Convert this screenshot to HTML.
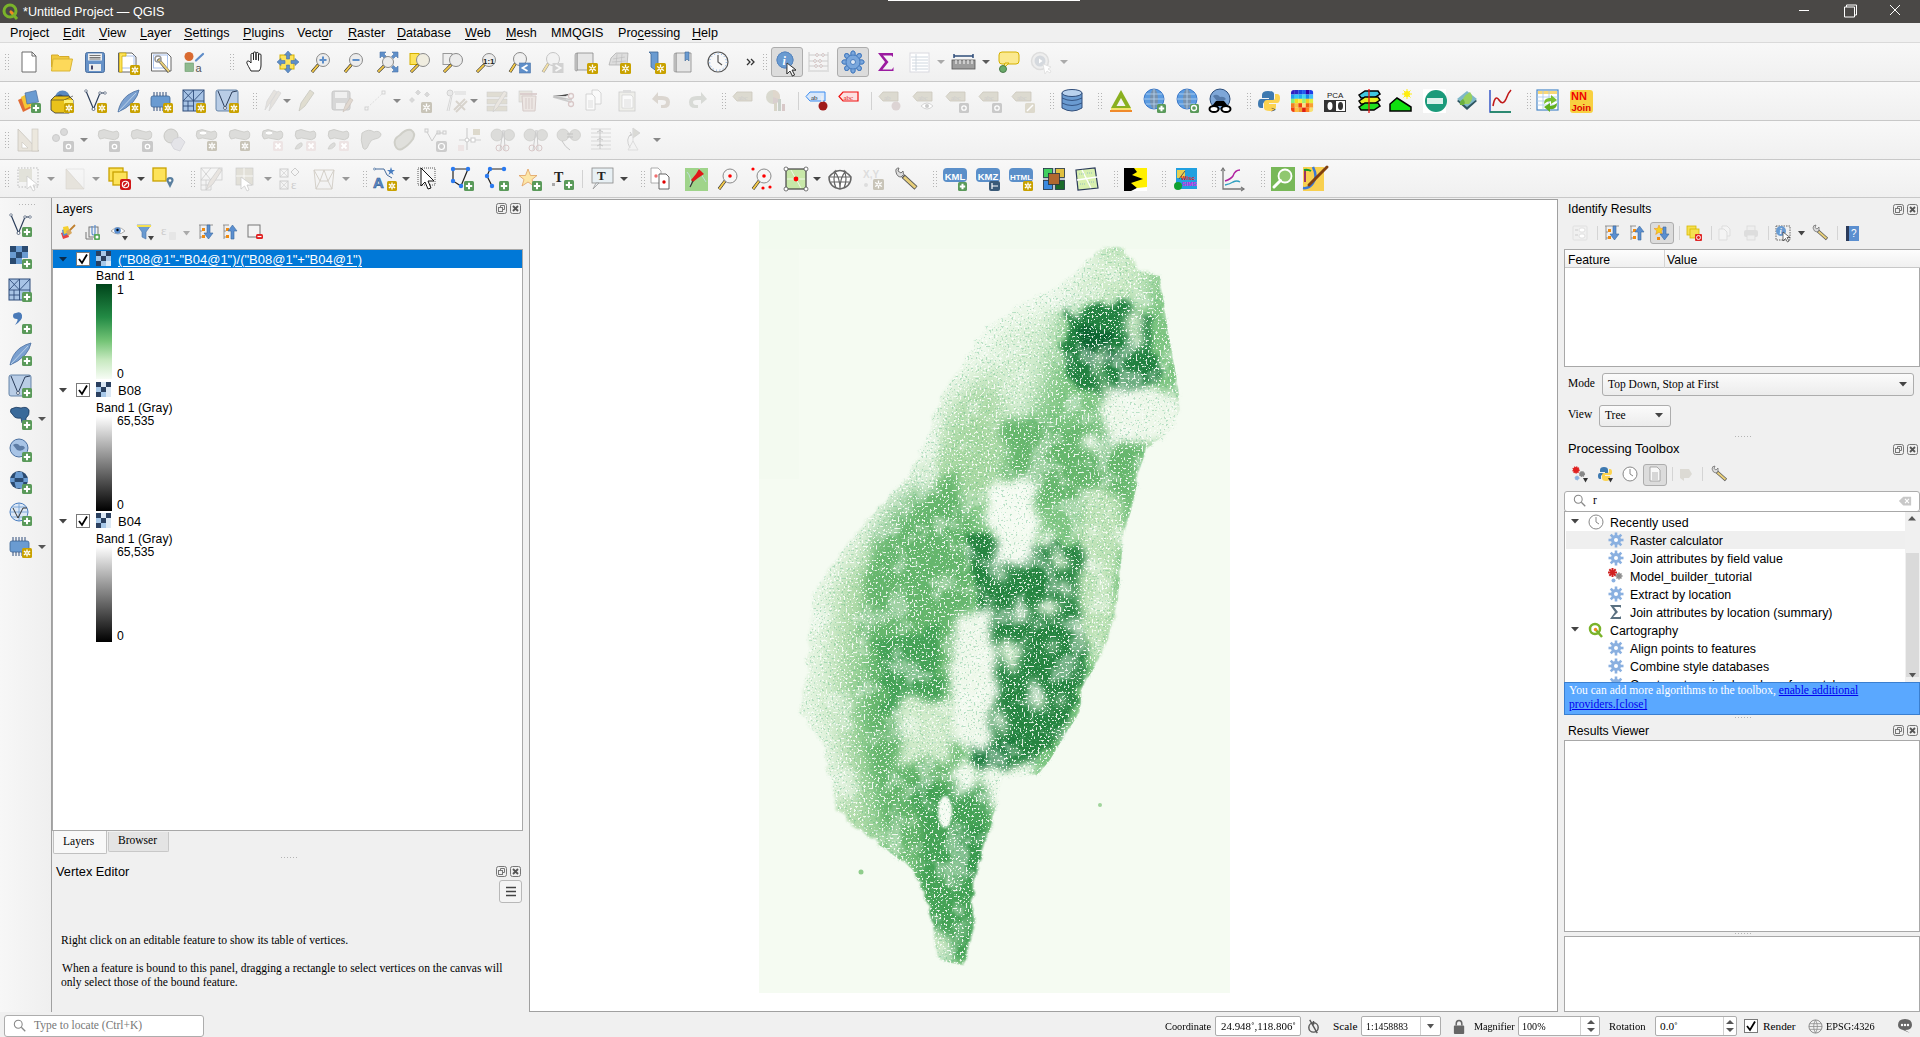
<!DOCTYPE html><html><head><meta charset="utf-8"><style>
html,body{margin:0;padding:0;width:1920px;height:1037px;overflow:hidden;background:#f0f0f0;position:relative;font-family:"Liberation Sans",sans-serif;font-size:12px;color:#000}
.t{position:absolute;white-space:nowrap;line-height:1}
.s{font-family:"Liberation Serif",serif}
svg{position:absolute;overflow:visible}
u{text-decoration:underline;text-decoration-thickness:1px;text-underline-offset:1.5px}
</style></head><body>

<div style="position:absolute;left:0px;top:0px;width:1920px;height:23px;background:#4a4846"></div>
<div style="position:absolute;left:888px;top:0px;width:192px;height:1px;background:#ffffff"></div>
<svg style="left:2px;top:3px" width="17" height="17" viewBox="0 0 17 17"><circle cx="8" cy="8" r="6" fill="none" stroke="#7ab32a" stroke-width="3"/><path d="M9 9L15 16" stroke="#7ab32a" stroke-width="3"/><path d="M8 8L11 11" stroke="#f28a1e" stroke-width="2.5"/></svg>
<div class="t" style="left:23px;top:6.33px;font-size:12.6px;color:#fff">*Untitled Project — QGIS</div>
<svg style="left:1799px;top:5px" width="110" height="12"><path d="M0 5.5H10" stroke="#fff"/><path d="M45.5 2.5H55.5V12.5H45.5ZM47.5 2.5V0.5H57.5V10.5H55.5" fill="none" stroke="#fff" transform="translate(0,-0.5)"/><path d="M91 0L101 10M101 0L91 10" stroke="#fff"/></svg>
<div style="position:absolute;left:0px;top:23px;width:1920px;height:19px;background:#f0f0f0"></div>
<div style="position:absolute;left:0px;top:42px;width:1920px;height:1px;background:#dadada"></div>
<div class="t" style="left:10px;top:27.33px;font-size:12.6px;">Pro<u>j</u>ect</div>
<div class="t" style="left:63px;top:27.33px;font-size:12.6px;"><u>E</u>dit</div>
<div class="t" style="left:99px;top:27.33px;font-size:12.6px;"><u>V</u>iew</div>
<div class="t" style="left:140px;top:27.33px;font-size:12.6px;"><u>L</u>ayer</div>
<div class="t" style="left:184px;top:27.33px;font-size:12.6px;"><u>S</u>ettings</div>
<div class="t" style="left:243px;top:27.33px;font-size:12.6px;"><u>P</u>lugins</div>
<div class="t" style="left:297px;top:27.33px;font-size:12.6px;">Vect<u>o</u>r</div>
<div class="t" style="left:348px;top:27.33px;font-size:12.6px;"><u>R</u>aster</div>
<div class="t" style="left:397px;top:27.33px;font-size:12.6px;"><u>D</u>atabase</div>
<div class="t" style="left:465px;top:27.33px;font-size:12.6px;"><u>W</u>eb</div>
<div class="t" style="left:506px;top:27.33px;font-size:12.6px;"><u>M</u>esh</div>
<div class="t" style="left:551px;top:27.33px;font-size:12.6px;">MMQGIS</div>
<div class="t" style="left:618px;top:27.33px;font-size:12.6px;">Pro<u>c</u>essing</div>
<div class="t" style="left:692px;top:27.33px;font-size:12.6px;"><u>H</u>elp</div>
<div style="position:absolute;left:0px;top:43px;width:1920px;height:38px;background:linear-gradient(#f8f8f8,#f0f0f0)"></div>
<div style="position:absolute;left:0px;top:81px;width:1920px;height:1px;background:#c8c8c8"></div>
<div style="position:absolute;left:0px;top:82px;width:1920px;height:38px;background:linear-gradient(#f8f8f8,#f0f0f0)"></div>
<div style="position:absolute;left:0px;top:120px;width:1920px;height:1px;background:#c8c8c8"></div>
<div style="position:absolute;left:0px;top:121px;width:1920px;height:38px;background:linear-gradient(#f8f8f8,#f0f0f0)"></div>
<div style="position:absolute;left:0px;top:159px;width:1920px;height:1px;background:#c8c8c8"></div>
<div style="position:absolute;left:0px;top:160px;width:1920px;height:37px;background:linear-gradient(#f8f8f8,#f0f0f0)"></div>
<div style="position:absolute;left:0px;top:197px;width:1920px;height:1px;background:#c8c8c8"></div>
<svg style="left:5px;top:54px" width="4" height="17"><rect x="0" y="0" width="1" height="1" fill="#b4b4b4"/><rect x="0" y="3" width="1" height="1" fill="#b4b4b4"/><rect x="0" y="6" width="1" height="1" fill="#b4b4b4"/><rect x="0" y="9" width="1" height="1" fill="#b4b4b4"/><rect x="0" y="12" width="1" height="1" fill="#b4b4b4"/><rect x="0" y="15" width="1" height="1" fill="#b4b4b4"/><rect x="3" y="0" width="1" height="1" fill="#b4b4b4"/><rect x="3" y="3" width="1" height="1" fill="#b4b4b4"/><rect x="3" y="6" width="1" height="1" fill="#b4b4b4"/><rect x="3" y="9" width="1" height="1" fill="#b4b4b4"/><rect x="3" y="12" width="1" height="1" fill="#b4b4b4"/><rect x="3" y="15" width="1" height="1" fill="#b4b4b4"/></svg>
<svg style="left:17px;top:50px" width="24" height="24" viewBox="0 0 24 24" ><path d="M5 2H15L19 6V22H5Z" fill="#fff" stroke="#6b6b6b" stroke-width="1"/><path d="M15 2V6H19" fill="none" stroke="#6b6b6b"/></svg>
<svg style="left:50px;top:50px" width="24" height="24" viewBox="0 0 24 24" ><path d="M1.5 5H8L9.5 6.5H19V17H1.5Z" fill="#f0c93f" stroke="#d4aa2a" stroke-width="1"/><path d="M3 9H22.5L20 21H1.5Z" fill="#fdd95a" stroke="#d9b534" stroke-width="1"/></svg>
<svg style="left:83px;top:50px" width="24" height="24" viewBox="0 0 24 24" ><rect x="2.5" y="2.5" width="19" height="20" rx="2" fill="#6792c8" stroke="#4a6f9f"/><rect x="5" y="3.5" width="14" height="7" fill="#eee"/><path d="M6.5 5.5H17.5M6.5 7.5H17.5M6.5 9H17.5" stroke="#555" stroke-width="0.8"/><rect x="6" y="14" width="12" height="7" fill="#eee"/><rect x="8" y="15.5" width="2" height="4" fill="#446"/></svg>
<svg style="left:116px;top:50px" width="24" height="24" viewBox="0 0 24 24" ><path d="M2.5 3H16L20 7V22H2.5Z" fill="#fff" stroke="#666"/><rect x="5" y="6" width="13" height="12" fill="none" stroke="#a9c2ee"/><path d="M3.5 3H10V6H6V22H3.5Z" fill="#fde35a" stroke="#d4b000" stroke-width="0.8"/><rect x="14" y="15" width="10" height="10" rx="1.5" fill="#c9a200"/><path d="M19.0 16.4V23.6M15.88 18.20L22.12 21.80M15.88 21.80L22.12 18.20" stroke="#fff" stroke-width="1.35"/><circle cx="19.0" cy="20.0" r="1.3" fill="#c9a200" stroke="#fff" stroke-width="1"/></svg>
<svg style="left:149px;top:50px" width="24" height="24" viewBox="0 0 24 24" ><path d="M2.5 3H18L22 7V21H2.5Z" fill="#fff" stroke="#666"/><rect x="4.5" y="5" width="14" height="13" fill="none" stroke="#a9c2ee"/><path d="M9 9L20 22" stroke="#444" stroke-width="3"/><path d="M9.5 9.5L20 21.5" stroke="#e8cf7a" stroke-width="2"/><circle cx="9" cy="9" r="3" fill="none" stroke="#999" stroke-width="1.5"/></svg>
<svg style="left:182px;top:50px" width="24" height="24" viewBox="0 0 24 24" ><circle cx="7" cy="6.5" r="4.5" fill="#d96a30"/><rect x="3" y="13" width="8.5" height="8.5" fill="#8fba8f" stroke="#6a9a6a" stroke-width="0.6"/><path d="M14 10.5L21 4" stroke="#5e8cc8" stroke-width="2.2" stroke-linecap="round"/><text x="13.5" y="21.5" font-family="Liberation Sans" font-size="11" fill="#555">a</text></svg>
<svg style="left:230px;top:54px" width="4" height="17"><rect x="0" y="0" width="1" height="1" fill="#b4b4b4"/><rect x="0" y="3" width="1" height="1" fill="#b4b4b4"/><rect x="0" y="6" width="1" height="1" fill="#b4b4b4"/><rect x="0" y="9" width="1" height="1" fill="#b4b4b4"/><rect x="0" y="12" width="1" height="1" fill="#b4b4b4"/><rect x="0" y="15" width="1" height="1" fill="#b4b4b4"/><rect x="3" y="0" width="1" height="1" fill="#b4b4b4"/><rect x="3" y="3" width="1" height="1" fill="#b4b4b4"/><rect x="3" y="6" width="1" height="1" fill="#b4b4b4"/><rect x="3" y="9" width="1" height="1" fill="#b4b4b4"/><rect x="3" y="12" width="1" height="1" fill="#b4b4b4"/><rect x="3" y="15" width="1" height="1" fill="#b4b4b4"/></svg>
<svg style="left:244px;top:50px" width="24" height="24" viewBox="0 0 24 24" ><path d="M7 21C5 17 2 13 3 11.5C4 10.5 5.5 11 7 13V4.5C7 3 9.5 3 9.5 4.5V10V3C9.5 1.5 12 1.5 12 3V10V3.5C12 2 14.5 2 14.5 3.5V10.5V5C14.5 3.5 17 3.5 17 5V15C17 18 16 20 15 21Z" fill="#fff" stroke="#222" stroke-width="1"/></svg>
<svg style="left:276px;top:50px" width="24" height="24" viewBox="0 0 24 24" ><rect x="4" y="5" width="14" height="14" fill="#fde35a" stroke="#d4b000"/><path d="M12 1L15.5 5H13.5V9H10.5V5H8.5ZM12 23L8.5 19H10.5V15H13.5V19H15.5ZM1 12L5 8.5V10.5H9V13.5H5V15.5ZM23 12L19 15.5V13.5H15V10.5H19V8.5Z" fill="#5f8fc9" stroke="#4a73a8" stroke-width="0.6"/></svg>
<svg style="left:309px;top:50px" width="24" height="24" viewBox="0 0 24 24" ><path d="M9.45 14.55L3 22" stroke="#222" stroke-width="3"/><path d="M9.125 14.875L3.2 21.8" stroke="#f2c94c" stroke-width="2"/><circle cx="14" cy="10" r="6.5" fill="#ececec" stroke="#8a8a8a" stroke-width="1"/><path d="M14 6.5V13.5M10.5 10H17.5" stroke="#5f8fc9" stroke-width="2"/></svg>
<svg style="left:342px;top:50px" width="24" height="24" viewBox="0 0 24 24" ><path d="M9.45 14.55L3 22" stroke="#222" stroke-width="3"/><path d="M9.125 14.875L3.2 21.8" stroke="#f2c94c" stroke-width="2"/><circle cx="14" cy="10" r="6.5" fill="#ececec" stroke="#8a8a8a" stroke-width="1"/><path d="M10.5 10H17.5" stroke="#5f8fc9" stroke-width="2"/></svg>
<svg style="left:375px;top:50px" width="24" height="24" viewBox="0 0 24 24" ><path d="M5 2H11L9 4L11.5 6.5L9.5 8.5L7 6L5 8ZM23 2V8L21 6L18.5 8.5L16.5 6.5L19 4L17 2ZM23 22H17L19 20L16.5 17.5L18.5 15.5L21 18L23 16Z" fill="#5f8fc9" stroke="#4a73a8" stroke-width="0.6"/><path d="M9.15 15.85L3 22" stroke="#222" stroke-width="3"/><path d="M8.875 16.125L3.2 21.8" stroke="#f2c94c" stroke-width="2"/><circle cx="13" cy="12" r="5.5" fill="#ececec" stroke="#8a8a8a" stroke-width="1"/></svg>
<svg style="left:408px;top:50px" width="24" height="24" viewBox="0 0 24 24" ><rect x="2" y="3.5" width="9" height="11" fill="#fde35a" stroke="#d4b000"/><path d="M10.45 14.55L3 22" stroke="#222" stroke-width="3"/><path d="M10.125 14.875L3.2 21.8" stroke="#f2c94c" stroke-width="2"/><circle cx="15" cy="10" r="6.5" fill="#f0ede0" stroke="#8a8a8a" stroke-width="1"/></svg>
<svg style="left:441px;top:50px" width="24" height="24" viewBox="0 0 24 24" ><rect x="2" y="3.5" width="9" height="11" fill="#efefef" stroke="#999"/><path d="M10.45 14.55L3 22" stroke="#222" stroke-width="3"/><path d="M10.125 14.875L3.2 21.8" stroke="#f2c94c" stroke-width="2"/><circle cx="15" cy="10" r="6.5" fill="#ececec" stroke="#8a8a8a" stroke-width="1"/></svg>
<svg style="left:474px;top:50px" width="24" height="24" viewBox="0 0 24 24" ><path d="M10.45 14.55L3 22" stroke="#222" stroke-width="3"/><path d="M10.125 14.875L3.2 21.8" stroke="#f2c94c" stroke-width="2"/><circle cx="15" cy="10" r="6.5" fill="#ececec" stroke="#8a8a8a" stroke-width="1"/><text x="9" y="14" font-family="Liberation Sans" font-weight="bold" font-size="8" fill="#222">1:1</text></svg>
<svg style="left:507px;top:50px" width="24" height="24" viewBox="0 0 24 24" ><path d="M8.45 13.55L3 22" stroke="#222" stroke-width="3"/><path d="M8.125 13.875L3.2 21.8" stroke="#f2c94c" stroke-width="2"/><circle cx="13" cy="9" r="6.5" fill="#f0f0f0" stroke="#8a8a8a" stroke-width="1"/><rect x="12.5" y="13" width="11" height="10" fill="#5f8fc9" stroke="#4a73a8" stroke-width="0.6"/><path d="M20.5 15L15.5 18L20.5 21" fill="none" stroke="#fff" stroke-width="1.8"/></svg>
<svg style="left:540px;top:50px" width="24" height="24" viewBox="0 0 24 24" ><g opacity="0.45"><path d="M8.45 13.55L3 22" stroke="#222" stroke-width="3"/><path d="M8.125 13.875L3.2 21.8" stroke="#f2c94c" stroke-width="2"/><circle cx="13" cy="9" r="6.5" fill="#f0f0f0" stroke="#8a8a8a" stroke-width="1"/><rect x="12.5" y="13" width="11" height="10" fill="#aaa"/><path d="M15.5 15L20.5 18L15.5 21" fill="none" stroke="#fff" stroke-width="1.8"/></g></svg>
<svg style="left:574px;top:50px" width="24" height="24" viewBox="0 0 24 24" ><path d="M3 3H19V20H3Z" fill="#e6e6e6" stroke="#888" stroke-width="0.8"/><path d="M3 3Q1 3 1 5V20Q1 21 3 21V3" fill="#d0d0d0" stroke="#888" stroke-width="0.6"/><rect x="13" y="13" width="11" height="11" rx="1.5" fill="#c9a200"/><path d="M18.5 14.54V22.46M15.07 16.52L21.93 20.48M15.07 20.48L21.93 16.52" stroke="#fff" stroke-width="1.35"/><circle cx="18.5" cy="18.5" r="1.3" fill="#c9a200" stroke="#fff" stroke-width="1"/></svg>
<svg style="left:607px;top:50px" width="24" height="24" viewBox="0 0 24 24" ><path d="M4 8L9 3H21L20 15L2 15Z" fill="#ddd" stroke="#aaa" stroke-width="0.7"/><path d="M6 9L18 7M5 12L19 11M10 4L9 15M15 4L14 15" stroke="#bbb" stroke-width="0.6"/><rect x="13" y="13" width="11" height="11" rx="1.5" fill="#c9a200"/><path d="M18.5 14.54V22.46M15.07 16.52L21.93 20.48M15.07 20.48L21.93 16.52" stroke="#fff" stroke-width="1.35"/><circle cx="18.5" cy="18.5" r="1.3" fill="#c9a200" stroke="#fff" stroke-width="1"/></svg>
<svg style="left:642px;top:50px" width="24" height="24" viewBox="0 0 24 24" ><path d="M7 2H16V22L9 17V4Z" fill="#6a9bd1" stroke="#3e6696" stroke-width="0.8"/><rect x="13" y="13" width="11" height="11" rx="1.5" fill="#c9a200"/><path d="M18.5 14.54V22.46M15.07 16.52L21.93 20.48M15.07 20.48L21.93 16.52" stroke="#fff" stroke-width="1.35"/><circle cx="18.5" cy="18.5" r="1.3" fill="#c9a200" stroke="#fff" stroke-width="1"/></svg>
<svg style="left:672px;top:50px" width="24" height="24" viewBox="0 0 24 24" ><path d="M4 3H19V22H4Z" fill="#e6e6e6" stroke="#888" stroke-width="0.8"/><path d="M4 3Q2 3 2 5V21Q2 22 4 22V3" fill="#d0d0d0" stroke="#888" stroke-width="0.6"/><path d="M13 2H17V11L15 9L13 11Z" fill="#6a9bd1" stroke="#3e6696" stroke-width="0.6"/></svg>
<svg style="left:706px;top:50px" width="24" height="24" viewBox="0 0 24 24" ><circle cx="12" cy="12" r="10" fill="#f8f8f8" stroke="#555" stroke-width="1.2"/><path d="M12 5V12L16 15" stroke="#555" stroke-width="1.2" fill="none"/><circle cx="12" cy="12" r="8.3" fill="none" stroke="#4a8ad8" stroke-width="0.8" stroke-dasharray="1 2.5"/></svg>
<svg style="left:742px;top:50px" width="24" height="24" viewBox="0 0 24 24" ><path d="M5 9L8 12L5 15M9 9L12 12L9 15" fill="none" stroke="#333" stroke-width="1.3"/></svg>
<svg style="left:763px;top:54px" width="4" height="17"><rect x="0" y="0" width="1" height="1" fill="#b4b4b4"/><rect x="0" y="3" width="1" height="1" fill="#b4b4b4"/><rect x="0" y="6" width="1" height="1" fill="#b4b4b4"/><rect x="0" y="9" width="1" height="1" fill="#b4b4b4"/><rect x="0" y="12" width="1" height="1" fill="#b4b4b4"/><rect x="0" y="15" width="1" height="1" fill="#b4b4b4"/><rect x="3" y="0" width="1" height="1" fill="#b4b4b4"/><rect x="3" y="3" width="1" height="1" fill="#b4b4b4"/><rect x="3" y="6" width="1" height="1" fill="#b4b4b4"/><rect x="3" y="9" width="1" height="1" fill="#b4b4b4"/><rect x="3" y="12" width="1" height="1" fill="#b4b4b4"/><rect x="3" y="15" width="1" height="1" fill="#b4b4b4"/></svg>
<div style="position:absolute;left:771px;top:47px;width:32px;height:30px;background:#dcdcdc;border:1px solid #adadad;border-radius:3px;box-sizing:border-box"></div>
<svg style="left:774px;top:50px" width="24" height="24" viewBox="0 0 24 24" ><circle cx="11" cy="10" r="8" fill="#6a9bd1" stroke="#5a88c0"/><text x="8.5" y="15" font-family="Liberation Serif" font-style="italic" font-weight="bold" font-size="12" fill="#fff">i</text><path d="M13 13L13 24L16 21L18.5 26L20.5 25L18 20H22Z" fill="#fff" stroke="#333" stroke-width="0.9"/></svg>
<svg style="left:807px;top:50px" width="24" height="24" viewBox="0 0 24 24" ><path d="M2 2V20M21 2V20M2 5H21M2 11H21M2 16H21M1 21H22" stroke="#ccc" stroke-width="1"/><path d="M8 5L10 3L12 5L10 7ZM14 5L16 3L18 5L16 7ZM6 11L8 9L10 11L8 13ZM11 11L13 9L15 11L13 13ZM7 16L9 14L11 16L9 18ZM12 16L14 14L16 16L14 18Z" fill="none" stroke="#d9c9c9" stroke-width="0.9"/></svg>
<div style="position:absolute;left:837px;top:47px;width:32px;height:30px;background:#dcdcdc;border:1px solid #adadad;border-radius:3px;box-sizing:border-box"></div>
<svg style="left:841px;top:50px" width="24" height="24" viewBox="0 0 24 24" ><g transform="translate(12 12)" fill="#7aa7dc" stroke="#4a7ec0" stroke-width="1"><rect x="-2" y="-11" width="4" height="6" rx="2" transform="rotate(0)"/><rect x="-2" y="-11" width="4" height="6" rx="2" transform="rotate(45)"/><rect x="-2" y="-11" width="4" height="6" rx="2" transform="rotate(90)"/><rect x="-2" y="-11" width="4" height="6" rx="2" transform="rotate(135)"/><rect x="-2" y="-11" width="4" height="6" rx="2" transform="rotate(180)"/><rect x="-2" y="-11" width="4" height="6" rx="2" transform="rotate(225)"/><rect x="-2" y="-11" width="4" height="6" rx="2" transform="rotate(270)"/><rect x="-2" y="-11" width="4" height="6" rx="2" transform="rotate(315)"/><circle r="7" /><circle r="2.5" fill="#dfe9f5"/></g></svg>
<svg style="left:874px;top:50px" width="24" height="24" viewBox="0 0 24 24" ><path d="M4 3H19V7L17.5 5.5H9L14.5 12L8.5 19.5H18L19.5 17V21H4L11 12Z" fill="#9b1ba0"/></svg>
<svg style="left:907px;top:50px" width="24" height="24" viewBox="0 0 24 24" ><rect x="3" y="3" width="19" height="19" fill="#fff" stroke="#d9d9e0"/><path d="M4 7H21M5 10H21M5 13H21M5 16H21M5 19H21M9 4V21" stroke="#d0d8e0" stroke-width="1"/></svg>
<svg style="left:937px;top:60px" width="8" height="5"><path d="M0 0H8L4 4Z" fill="#aaa"/></svg>
<svg style="left:951px;top:50px" width="24" height="24" viewBox="0 0 24 24" ><path d="M3 4V8M3 6H22M22 4V8" stroke="#2f4d7a" stroke-width="1.5"/><rect x="1" y="10" width="23" height="9" fill="#9d9d9d" stroke="#555" stroke-width="0.8"/><path d="M5 10V14M9 10V14M13 10V14M17 10V14M21 10V14" stroke="#fff" stroke-width="1"/></svg>
<svg style="left:982px;top:60px" width="8" height="5"><path d="M0 0H8L4 4Z" fill="#5a5a5a"/></svg>
<svg style="left:996px;top:50px" width="24" height="24" viewBox="0 0 24 24" ><rect x="3" y="2" width="20" height="12" rx="3" fill="#fbe98f" stroke="#d4b000"/><path d="M9 13L7 19L13 13Z" fill="#fbe98f" stroke="#d4b000"/><circle cx="7" cy="19" r="3.5" fill="#6aaa6a" stroke="#4a7a4a"/></svg>
<svg style="left:1029px;top:50px" width="24" height="24" viewBox="0 0 24 24" ><circle cx="11" cy="11" r="8.5" fill="#eee" stroke="#ddd" stroke-width="1.5"/><circle cx="11" cy="11" r="5.5" fill="#d5d9de"/><path d="M10 8.5L13.5 11L10 13.5Z" fill="#fff"/><path d="M14 14L16 24L18 21L21 23L22 21L19 19L22 17Z" fill="#fff" stroke="#ddd" stroke-width="0.8"/></svg>
<svg style="left:1060px;top:60px" width="8" height="5"><path d="M0 0H8L4 4Z" fill="#aaa"/></svg>
<svg style="left:5px;top:93px" width="4" height="17"><rect x="0" y="0" width="1" height="1" fill="#b4b4b4"/><rect x="0" y="3" width="1" height="1" fill="#b4b4b4"/><rect x="0" y="6" width="1" height="1" fill="#b4b4b4"/><rect x="0" y="9" width="1" height="1" fill="#b4b4b4"/><rect x="0" y="12" width="1" height="1" fill="#b4b4b4"/><rect x="0" y="15" width="1" height="1" fill="#b4b4b4"/><rect x="3" y="0" width="1" height="1" fill="#b4b4b4"/><rect x="3" y="3" width="1" height="1" fill="#b4b4b4"/><rect x="3" y="6" width="1" height="1" fill="#b4b4b4"/><rect x="3" y="9" width="1" height="1" fill="#b4b4b4"/><rect x="3" y="12" width="1" height="1" fill="#b4b4b4"/><rect x="3" y="15" width="1" height="1" fill="#b4b4b4"/></svg>
<svg style="left:17px;top:89px" width="24" height="24" viewBox="0 0 24 24" ><path d="M1 11L9 7L14 19L6 23Z" fill="#e06c35"/><path d="M4 8L12 4L16 16L8 20Z" fill="#f5c636"/><path d="M8 4L19 1.5L21.5 13L10 15Z" fill="#6a9bd1" stroke="#4a6f9f" stroke-width="0.7"/><rect x="14" y="14" width="10" height="10" rx="1.5" fill="#5a9a5a"/><path d="M19.0 15.8V22.2M15.8 19.0H22.2" stroke="#fff" stroke-width="2"/></svg>
<svg style="left:50px;top:89px" width="24" height="24" viewBox="0 0 24 24" ><circle cx="12.5" cy="9" r="7.5" fill="#5888c0"/><path d="M8 6Q11 4 13 7Q16 8 15 11Q12 13 9 11Z" fill="#2b4d7a" opacity="0.6"/><path d="M1 11L5 7H19L23 11V21L19 24H5L1 21Z" fill="#e9c21a" stroke="#333" stroke-width="0.8"/><path d="M1 11H14L23 7" fill="none" stroke="#333" stroke-width="0.6"/><path d="M14 11H23V24H14Z" fill="#fcf079"/><rect x="14" y="14" width="10" height="10" rx="1.5" fill="#c9a200"/><path d="M19.0 15.4V22.6M15.88 17.20L22.12 20.80M15.88 20.80L22.12 17.20" stroke="#fff" stroke-width="1.35"/><circle cx="19.0" cy="19.0" r="1.3" fill="#c9a200" stroke="#fff" stroke-width="1"/></svg>
<svg style="left:83px;top:89px" width="24" height="24" viewBox="0 0 24 24" ><path d="M3 2L10.5 20L17 4L22 4" fill="none" stroke="#2b3d5a" stroke-width="1.2"/><path d="M3 0.5L4.5 2L3 3.5L1.5 2ZM17 2.5L18.5 4L17 5.5L15.5 4ZM22 2.5L23.5 4L22 5.5L20.5 4Z" fill="#fff" stroke="#2b3d5a" stroke-width="0.7"/><circle cx="10.5" cy="20" r="1.5" fill="#fff" stroke="#2b3d5a" stroke-width="0.7"/><rect x="14" y="14" width="10" height="10" rx="1.5" fill="#c9a200"/><path d="M19.0 15.4V22.6M15.88 17.20L22.12 20.80M15.88 20.80L22.12 17.20" stroke="#fff" stroke-width="1.35"/><circle cx="19.0" cy="19.0" r="1.3" fill="#c9a200" stroke="#fff" stroke-width="1"/></svg>
<svg style="left:116px;top:89px" width="24" height="24" viewBox="0 0 24 24" ><path d="M2 23Q4 12 12 6Q18 2 23 1Q22 7 17 13Q10 20 2 23Z" fill="#7aa0d0" stroke="#4a6f9f" stroke-width="0.8"/><path d="M3 22L20 4" stroke="#cde" stroke-width="0.8"/><rect x="14" y="14" width="10" height="10" rx="1.5" fill="#c9a200"/><path d="M19.0 15.4V22.6M15.88 17.20L22.12 20.80M15.88 20.80L22.12 17.20" stroke="#fff" stroke-width="1.35"/><circle cx="19.0" cy="19.0" r="1.3" fill="#c9a200" stroke="#fff" stroke-width="1"/></svg>
<svg style="left:149px;top:89px" width="24" height="24" viewBox="0 0 24 24" ><rect x="2" y="7" width="19" height="11" rx="2" fill="#6a9bd1" stroke="#3e6696" stroke-width="0.8"/><path d="M5 3V7M8 3V7M11 3V7M14 3V7M17 3V7M5 18V22M8 18V22M11 18V22M14 18V22M17 18V22" stroke="#2f4d7a" stroke-width="1"/><rect x="14" y="14" width="10" height="10" rx="1.5" fill="#c9a200"/><path d="M19.0 15.4V22.6M15.88 17.20L22.12 20.80M15.88 20.80L22.12 17.20" stroke="#fff" stroke-width="1.35"/><circle cx="19.0" cy="19.0" r="1.3" fill="#c9a200" stroke="#fff" stroke-width="1"/></svg>
<svg style="left:182px;top:89px" width="24" height="24" viewBox="0 0 24 24" ><rect x="1" y="1" width="21" height="21" fill="#a8c4e6" stroke="#2f4d7a" stroke-width="1"/><path d="M1 12H22M11.5 1V22M1 1L11.5 12M11.5 1L1 12M22 1L11.5 12M1 17H11.5M6 12V22" stroke="#2f4d7a" stroke-width="0.9"/><rect x="14" y="14" width="10" height="10" rx="1.5" fill="#c9a200"/><path d="M19.0 15.4V22.6M15.88 17.20L22.12 20.80M15.88 20.80L22.12 17.20" stroke="#fff" stroke-width="1.35"/><circle cx="19.0" cy="19.0" r="1.3" fill="#c9a200" stroke="#fff" stroke-width="1"/></svg>
<svg style="left:215px;top:89px" width="24" height="24" viewBox="0 0 24 24" ><rect x="1" y="1" width="22" height="21" rx="2" fill="#b9cde6" stroke="#5a7aa0" stroke-width="0.9"/><path d="M3 2L10 19L17 3L22 2" fill="none" stroke="#2b3d5a" stroke-width="1"/><circle cx="10" cy="19" r="1.5" fill="#fff" stroke="#2b3d5a" stroke-width="0.7"/><rect x="14" y="14" width="10" height="10" rx="1.5" fill="#c9a200"/><path d="M19.0 15.4V22.6M15.88 17.20L22.12 20.80M15.88 20.80L22.12 17.20" stroke="#fff" stroke-width="1.35"/><circle cx="19.0" cy="19.0" r="1.3" fill="#c9a200" stroke="#fff" stroke-width="1"/></svg>
<svg style="left:253px;top:93px" width="4" height="17"><rect x="0" y="0" width="1" height="1" fill="#b4b4b4"/><rect x="0" y="3" width="1" height="1" fill="#b4b4b4"/><rect x="0" y="6" width="1" height="1" fill="#b4b4b4"/><rect x="0" y="9" width="1" height="1" fill="#b4b4b4"/><rect x="0" y="12" width="1" height="1" fill="#b4b4b4"/><rect x="0" y="15" width="1" height="1" fill="#b4b4b4"/><rect x="3" y="0" width="1" height="1" fill="#b4b4b4"/><rect x="3" y="3" width="1" height="1" fill="#b4b4b4"/><rect x="3" y="6" width="1" height="1" fill="#b4b4b4"/><rect x="3" y="9" width="1" height="1" fill="#b4b4b4"/><rect x="3" y="12" width="1" height="1" fill="#b4b4b4"/><rect x="3" y="15" width="1" height="1" fill="#b4b4b4"/></svg>
<svg style="left:263px;top:89px" width="24" height="24" viewBox="0 0 24 24" ><g opacity="0.55"><path d="M2 21L4 12L11 1L14 3L7 14Z" fill="#d8d3cc" stroke="#bbb" stroke-width="0.7"/><path d="M6 22L8 13L15 2L18 4L11 15Z" fill="#d8d3cc" stroke="#bbb" stroke-width="0.7"/></g></svg>
<svg style="left:283px;top:99px" width="8" height="5"><path d="M0 0H8L4 4Z" fill="#888"/></svg>
<svg style="left:296px;top:89px" width="24" height="24" viewBox="0 0 24 24" ><path d="M3 22L5 14L14 1L18 4L9 17Z" fill="#e0ddd0" stroke="#c8c8c0" stroke-width="0.8"/></svg>
<svg style="left:330px;top:89px" width="24" height="24" viewBox="0 0 24 24" ><rect x="2" y="2" width="18" height="19" rx="2" fill="#d7d7d7" stroke="#c8c8c8"/><rect x="5" y="3" width="12" height="6" fill="#f0f0f0"/><rect x="6" y="14" width="9" height="6" fill="#f0f0f0"/><path d="M13 23L15 17L20 9L23 11L18 19Z" fill="#e0d8d0" stroke="#c8c0b8" stroke-width="0.6"/></svg>
<svg style="left:363px;top:89px" width="24" height="24" viewBox="0 0 24 24" ><rect x="2" y="18" width="3" height="3" fill="none" stroke="#ccc" stroke-width="0.8"/><rect x="19" y="2" width="3" height="3" fill="none" stroke="#ccc" stroke-width="0.8"/><path d="M4.5 18.5L19.5 4.5" stroke="#ddd" stroke-dasharray="2 1.5"/></svg>
<svg style="left:393px;top:99px" width="8" height="5"><path d="M0 0H8L4 4Z" fill="#888"/></svg>
<svg style="left:408px;top:89px" width="24" height="24" viewBox="0 0 24 24" ><path d="M10 1L12.5 3.5L10 6L7.5 3.5ZM19 3L21.5 5.5L19 8L16.5 5.5ZM4 8.5L6.5 11L4 13.5L1.5 11Z" fill="#d9d9d9" stroke="#ccc" stroke-width="0.6"/><rect x="13" y="13" width="11" height="11" rx="1.5" fill="#c8c4b8"/><path d="M18.5 14.54V22.46M15.07 16.52L21.93 20.48M15.07 20.48L21.93 16.52" stroke="#fff" stroke-width="1.35"/><circle cx="18.5" cy="18.5" r="1.3" fill="#c8c4b8" stroke="#fff" stroke-width="1"/></svg>
<svg style="left:444px;top:89px" width="24" height="24" viewBox="0 0 24 24" ><g opacity="0.5"><circle cx="6" cy="4" r="3" fill="#ddd" stroke="#999" stroke-width="0.7"/><path d="M7 6L3 22M8 7L5 22M10 3H22M11 5H22" stroke="#bbb"/><path d="M10 21L21 10M12 23L23 12M12 12L21 21" stroke="#bdb5a8" stroke-width="2"/></g></svg>
<svg style="left:470px;top:99px" width="8" height="5"><path d="M0 0H8L4 4Z" fill="#888"/></svg>
<svg style="left:486px;top:89px" width="24" height="24" viewBox="0 0 24 24" ><rect x="1" y="3" width="20" height="5" fill="#e0ddd3" stroke="#ccc" stroke-width="0.5"/><rect x="1" y="10" width="20" height="5" fill="#e0ddd3" stroke="#ccc" stroke-width="0.5"/><rect x="1" y="17" width="20" height="5" fill="#e0ddd3" stroke="#ccc" stroke-width="0.5"/><path d="M7 23L9 16L18 2L21 4L12 18Z" fill="#eae6e0" stroke="#ccc" stroke-width="0.6"/></svg>
<svg style="left:518px;top:89px" width="24" height="24" viewBox="0 0 24 24" ><rect x="1" y="2" width="13" height="11" fill="#e8e5df" stroke="#ccc" stroke-width="0.6"/><path d="M2 5H19" stroke="#d8c8c8" stroke-width="1.6"/><path d="M4 7H18L17 22H5Z" fill="#ece6e3" stroke="#d6cbc9" stroke-width="1"/><path d="M8 9V20M11 9V20M14 9V20" stroke="#d6cbc9" stroke-width="1"/></svg>
<svg style="left:552px;top:89px" width="24" height="24" viewBox="0 0 24 24" ><path d="M1 7L20 11M1 8L19 13" stroke="#ccc" stroke-width="1.3"/><path d="M2 7L14 7L18 5M2 8L14 10" stroke="#bbb" stroke-width="0.8"/><circle cx="19" cy="7" r="2.5" fill="none" stroke="#d9c8c8" stroke-width="1.3"/><circle cx="19" cy="15" r="2.5" fill="none" stroke="#d9c8c8" stroke-width="1.3"/></svg>
<svg style="left:584px;top:89px" width="24" height="24" viewBox="0 0 24 24" ><path d="M8 1H14L17 4V15H8Z" fill="#fafafa" stroke="#ccc" stroke-width="0.8"/><path d="M2 5H8L11 8V21H2Z" fill="#fafafa" stroke="#ccc" stroke-width="0.8"/><path d="M4 12H9M4 14H9M4 16H9M4 18H9" stroke="#ccc" stroke-width="0.6"/></svg>
<svg style="left:617px;top:89px" width="24" height="24" viewBox="0 0 24 24" ><rect x="2" y="3" width="16" height="19" fill="#eeeeea" stroke="#ccc" stroke-width="0.8"/><rect x="6" y="1" width="8" height="3" fill="#ddd"/><path d="M5 6H14L16 8V19H5Z" fill="#fafafa" stroke="#ccc" stroke-width="0.6"/><path d="M7 11H14M7 13H14M7 15H14M7 17H14" stroke="#ccc" stroke-width="0.6"/></svg>
<svg style="left:651px;top:89px" width="24" height="24" viewBox="0 0 24 24" ><path d="M1 10L7 3V7H11Q19 7 19 13Q19 19 13 19H10V16H12Q15 16 15 13Q15 11 11 11H7V15Z" fill="#dbd6d0"/></svg>
<svg style="left:684px;top:89px" width="24" height="24" viewBox="0 0 24 24" ><path d="M23 10L17 3V7H13Q5 7 5 13Q5 19 11 19H14V16H12Q9 16 9 13Q9 11 13 11H17V15Z" fill="#d8dad6"/></svg>
<svg style="left:722px;top:93px" width="4" height="17"><rect x="0" y="0" width="1" height="1" fill="#b4b4b4"/><rect x="0" y="3" width="1" height="1" fill="#b4b4b4"/><rect x="0" y="6" width="1" height="1" fill="#b4b4b4"/><rect x="0" y="9" width="1" height="1" fill="#b4b4b4"/><rect x="0" y="12" width="1" height="1" fill="#b4b4b4"/><rect x="0" y="15" width="1" height="1" fill="#b4b4b4"/><rect x="3" y="0" width="1" height="1" fill="#b4b4b4"/><rect x="3" y="3" width="1" height="1" fill="#b4b4b4"/><rect x="3" y="6" width="1" height="1" fill="#b4b4b4"/><rect x="3" y="9" width="1" height="1" fill="#b4b4b4"/><rect x="3" y="12" width="1" height="1" fill="#b4b4b4"/><rect x="3" y="15" width="1" height="1" fill="#b4b4b4"/></svg>
<svg style="left:732px;top:89px" width="24" height="24" viewBox="0 0 24 24" ><path d="M1 7.5L5 3H20V12H5Z" fill="#dcdad0" stroke="#cbc8bc" stroke-width="0.8"/><text x="6" y="10.5" font-family="Liberation Serif" font-size="7" fill="#ccc">abc</text></svg>
<svg style="left:765px;top:89px" width="24" height="24" viewBox="0 0 24 24" ><circle cx="8" cy="8" r="7" fill="#d9d9cf"/><path d="M8 8V1A7 7 0 0 1 14.5 10.5Z" fill="#dfd7cc"/><path d="M8 8L14.5 10.5A7 7 0 0 1 8 15Z" fill="#d9cfcf"/><rect x="9" y="14" width="3" height="8" fill="#d8d5c8"/><rect x="13" y="10" width="3" height="12" fill="#c9d0c9"/><rect x="17" y="15" width="3" height="7" fill="#d8c8c8"/></svg>
<div style="position:absolute;left:798px;top:92px;width:1px;height:18px;background:#d2d2d2"></div>
<svg style="left:805px;top:89px" width="24" height="24" viewBox="0 0 24 24" ><path d="M1 7.5L5 3H20V12H5Z" fill="#d8e8fb" stroke="#3b8cf0" stroke-width="1"/><text x="6" y="10.5" font-family="Liberation Serif" font-size="7" fill="#222">ab</text><circle cx="18" cy="17" r="4.5" fill="#a01a1a"/><path d="M17 7V13" stroke="#eee" stroke-width="1.5"/></svg>
<svg style="left:838px;top:89px" width="24" height="24" viewBox="0 0 24 24" ><path d="M1 7.5L5 3H20V12H5Z" fill="#fde0e0" stroke="#f01010" stroke-width="1.2"/><text x="5.5" y="10.5" font-family="Liberation Serif" font-size="7" fill="#e01010">abc</text></svg>
<div style="position:absolute;left:871px;top:92px;width:1px;height:18px;background:#d2d2d2"></div>
<svg style="left:878px;top:89px" width="24" height="24" viewBox="0 0 24 24" ><path d="M1 7.5L5 3H20V12H5Z" fill="#dcdad0" stroke="#cbc8bc" stroke-width="0.8"/><text x="6" y="10.5" font-family="Liberation Serif" font-size="7" fill="#ccc">ab</text><circle cx="18" cy="17" r="4.5" fill="#ddd4d4"/></svg>
<svg style="left:912px;top:89px" width="24" height="24" viewBox="0 0 24 24" ><path d="M1 7.5L5 3H20V12H5Z" fill="#dcdad0" stroke="#cbc8bc" stroke-width="0.8"/><text x="6" y="10.5" font-family="Liberation Serif" font-size="7" fill="#ccc">abc</text><path d="M9 17Q15 11 21 17Q15 23 9 17Z" fill="#fff" stroke="#ccc" stroke-width="0.8"/><circle cx="15" cy="17" r="2" fill="#ccc"/></svg>
<svg style="left:945px;top:89px" width="24" height="24" viewBox="0 0 24 24" ><path d="M1 7.5L5 3H20V12H5Z" fill="#dcdad0" stroke="#cbc8bc" stroke-width="0.8"/><text x="6" y="10.5" font-family="Liberation Serif" font-size="7" fill="#ccc">abc</text><rect x="14" y="14" width="10" height="10" rx="1.5" fill="#c9c9c9"/><circle cx="19.0" cy="19.0" r="2.2" fill="none" stroke="#fff" stroke-width="1.3"/></svg>
<svg style="left:978px;top:89px" width="24" height="24" viewBox="0 0 24 24" ><path d="M1 7.5L5 3H20V12H5Z" fill="#dcdad0" stroke="#cbc8bc" stroke-width="0.8"/><text x="6" y="10.5" font-family="Liberation Serif" font-size="7" fill="#ccc">abc</text><rect x="14" y="14" width="10" height="10" rx="1.5" fill="#c9c9c9"/><circle cx="19.0" cy="19.0" r="2.2" fill="none" stroke="#fff" stroke-width="1.3"/></svg>
<svg style="left:1011px;top:89px" width="24" height="24" viewBox="0 0 24 24" ><path d="M1 7.5L5 3H20V12H5Z" fill="#dcdad0" stroke="#cbc8bc" stroke-width="0.8"/><text x="6" y="10.5" font-family="Liberation Serif" font-size="7" fill="#ccc">abc</text><rect x="14" y="14" width="10" height="10" rx="1.5" fill="#ddd9cc"/><path d="M16 22L22 16" stroke="#fff" stroke-width="1.5"/></svg>
<svg style="left:1050px;top:93px" width="4" height="17"><rect x="0" y="0" width="1" height="1" fill="#b4b4b4"/><rect x="0" y="3" width="1" height="1" fill="#b4b4b4"/><rect x="0" y="6" width="1" height="1" fill="#b4b4b4"/><rect x="0" y="9" width="1" height="1" fill="#b4b4b4"/><rect x="0" y="12" width="1" height="1" fill="#b4b4b4"/><rect x="0" y="15" width="1" height="1" fill="#b4b4b4"/><rect x="3" y="0" width="1" height="1" fill="#b4b4b4"/><rect x="3" y="3" width="1" height="1" fill="#b4b4b4"/><rect x="3" y="6" width="1" height="1" fill="#b4b4b4"/><rect x="3" y="9" width="1" height="1" fill="#b4b4b4"/><rect x="3" y="12" width="1" height="1" fill="#b4b4b4"/><rect x="3" y="15" width="1" height="1" fill="#b4b4b4"/></svg>
<svg style="left:1060px;top:89px" width="24" height="24" viewBox="0 0 24 24" ><path d="M2 4V19Q12 25 22 19V4" fill="#6a9bd1" stroke="#2f4d7a" stroke-width="1"/><ellipse cx="12" cy="4" rx="10" ry="3.5" fill="#b9d2ee" stroke="#2f4d7a" stroke-width="1"/><path d="M2 9Q12 14 22 9M2 14Q12 19 22 14" fill="none" stroke="#2f4d7a" stroke-width="0.9"/></svg>
<svg style="left:1098px;top:93px" width="4" height="17"><rect x="0" y="0" width="1" height="1" fill="#b4b4b4"/><rect x="0" y="3" width="1" height="1" fill="#b4b4b4"/><rect x="0" y="6" width="1" height="1" fill="#b4b4b4"/><rect x="0" y="9" width="1" height="1" fill="#b4b4b4"/><rect x="0" y="12" width="1" height="1" fill="#b4b4b4"/><rect x="0" y="15" width="1" height="1" fill="#b4b4b4"/><rect x="3" y="0" width="1" height="1" fill="#b4b4b4"/><rect x="3" y="3" width="1" height="1" fill="#b4b4b4"/><rect x="3" y="6" width="1" height="1" fill="#b4b4b4"/><rect x="3" y="9" width="1" height="1" fill="#b4b4b4"/><rect x="3" y="12" width="1" height="1" fill="#b4b4b4"/><rect x="3" y="15" width="1" height="1" fill="#b4b4b4"/></svg>
<svg style="left:1109px;top:89px" width="24" height="24" viewBox="0 0 24 24" ><path d="M12 1L22 19H2Z" fill="#8ab020"/><path d="M12 9L16.5 17H7.5Z" fill="#f4f4f4"/><rect x="2" y="19" width="20" height="2" fill="#f3e36f"/><rect x="1" y="21" width="22" height="2" fill="#f08a2a"/></svg>
<svg style="left:1142px;top:89px" width="24" height="24" viewBox="0 0 24 24" ><circle cx="12" cy="10" r="10" fill="#5b9be0" stroke="#1f64c0" stroke-width="0.8"/><ellipse cx="12" cy="10" rx="4" ry="10" fill="#8a8a8a" opacity="0.6"/><path d="M2 10H22M4 5H20M4 15H20M12 0V20" stroke="#b8d4f0" stroke-width="0.8" fill="none"/><rect x="15" y="15" width="9" height="9" rx="1.5" fill="#5a9a5a"/><path d="M19.5 16.8V22.2M16.8 19.5H22.2" stroke="#fff" stroke-width="2"/></svg>
<svg style="left:1175px;top:89px" width="24" height="24" viewBox="0 0 24 24" ><circle cx="12" cy="10" r="10" fill="#5b9be0" stroke="#1f64c0" stroke-width="0.8"/><ellipse cx="12" cy="10" rx="4" ry="10" fill="#8a8a8a" opacity="0.6"/><path d="M2 10H22M4 5H20M4 15H20M12 0V20" stroke="#b8d4f0" stroke-width="0.8" fill="none"/><rect x="15" y="15" width="9" height="9" rx="1.5" fill="#5a9a5a"/><circle cx="19" cy="19" r="2.5" fill="none" stroke="#fff" stroke-width="1.3"/></svg>
<svg style="left:1208px;top:89px" width="24" height="24" viewBox="0 0 24 24" ><circle cx="12" cy="10" r="10" fill="#7ea7d8" stroke="#2b4d7a" stroke-width="1"/><path d="M5 7Q9 4 12 8Q16 7 18 10Q14 14 9 12Z" fill="#2b4d7a" opacity="0.5"/><ellipse cx="6" cy="20" rx="4.5" ry="3" fill="#fff" stroke="#000" stroke-width="2"/><ellipse cx="18" cy="20" rx="4.5" ry="3" fill="#fff" stroke="#000" stroke-width="2"/><path d="M4 17L8 12H16L20 17Z" fill="#000"/></svg>
<svg style="left:1247px;top:93px" width="4" height="17"><rect x="0" y="0" width="1" height="1" fill="#b4b4b4"/><rect x="0" y="3" width="1" height="1" fill="#b4b4b4"/><rect x="0" y="6" width="1" height="1" fill="#b4b4b4"/><rect x="0" y="9" width="1" height="1" fill="#b4b4b4"/><rect x="0" y="12" width="1" height="1" fill="#b4b4b4"/><rect x="0" y="15" width="1" height="1" fill="#b4b4b4"/><rect x="3" y="0" width="1" height="1" fill="#b4b4b4"/><rect x="3" y="3" width="1" height="1" fill="#b4b4b4"/><rect x="3" y="6" width="1" height="1" fill="#b4b4b4"/><rect x="3" y="9" width="1" height="1" fill="#b4b4b4"/><rect x="3" y="12" width="1" height="1" fill="#b4b4b4"/><rect x="3" y="15" width="1" height="1" fill="#b4b4b4"/></svg>
<svg style="left:1257px;top:89px" width="24" height="24" viewBox="0 0 24 24" ><path d="M11 2Q5 2 5 6V9H12V10H4Q1 10 1 15Q1 19 4 19H6V15Q6 13 9 13H14Q17 13 17 10V5Q17 2 11 2Z" fill="#3e79b0"/><path d="M13 22Q19 22 19 18V15H12V14H20Q23 14 23 9Q23 5 20 5H18V9Q18 11 15 11H10Q7 11 7 14V19Q7 22 13 22Z" fill="#fcd34f"/><text x="14" y="23" font-family="Liberation Sans" font-size="8" fill="#333">&gt;</text></svg>
<svg style="left:1290px;top:89px" width="24" height="24" viewBox="0 0 24 24" ><g clip-path="inset(0 round 3px)"><rect x="1.0" y="1.0" width="3.8" height="4.5" fill="#3020c0"/><rect x="4.7" y="1.0" width="3.8" height="4.5" fill="#2a2ac8"/><rect x="8.4" y="1.0" width="3.8" height="4.5" fill="#1848e0"/><rect x="12.100000000000001" y="1.0" width="3.8" height="4.5" fill="#2060f0"/><rect x="15.8" y="1.0" width="3.8" height="4.5" fill="#3000a8"/><rect x="19.5" y="1.0" width="3.8" height="4.5" fill="#2040e8"/><rect x="1.0" y="5.4" width="3.8" height="4.5" fill="#20a0f0"/><rect x="4.7" y="5.4" width="3.8" height="4.5" fill="#30c8f8"/><rect x="8.4" y="5.4" width="3.8" height="4.5" fill="#20b0f0"/><rect x="12.100000000000001" y="5.4" width="3.8" height="4.5" fill="#40d8f0"/><rect x="15.8" y="5.4" width="3.8" height="4.5" fill="#1890e8"/><rect x="19.5" y="5.4" width="3.8" height="4.5" fill="#40c0f8"/><rect x="1.0" y="9.8" width="3.8" height="4.5" fill="#80f080"/><rect x="4.7" y="9.8" width="3.8" height="4.5" fill="#f0e020"/><rect x="8.4" y="9.8" width="3.8" height="4.5" fill="#f8f040"/><rect x="12.100000000000001" y="9.8" width="3.8" height="4.5" fill="#a0f070"/><rect x="15.8" y="9.8" width="3.8" height="4.5" fill="#f0d020"/><rect x="19.5" y="9.8" width="3.8" height="4.5" fill="#e0f040"/><rect x="1.0" y="14.200000000000001" width="3.8" height="4.5" fill="#f08020"/><rect x="4.7" y="14.200000000000001" width="3.8" height="4.5" fill="#f8c040"/><rect x="8.4" y="14.200000000000001" width="3.8" height="4.5" fill="#f04010"/><rect x="12.100000000000001" y="14.200000000000001" width="3.8" height="4.5" fill="#ffe080"/><rect x="15.8" y="14.200000000000001" width="3.8" height="4.5" fill="#f06010"/><rect x="19.5" y="14.200000000000001" width="3.8" height="4.5" fill="#f8a030"/><rect x="1.0" y="18.6" width="3.8" height="4.5" fill="#f04010"/><rect x="4.7" y="18.6" width="3.8" height="4.5" fill="#ffc040"/><rect x="8.4" y="18.6" width="3.8" height="4.5" fill="#f0a030"/><rect x="12.100000000000001" y="18.6" width="3.8" height="4.5" fill="#e02010"/><rect x="15.8" y="18.6" width="3.8" height="4.5" fill="#ff8020"/><rect x="19.5" y="18.6" width="3.8" height="4.5" fill="#f8e070"/></g></svg>
<svg style="left:1323px;top:89px" width="24" height="24" viewBox="0 0 24 24" ><text x="4" y="9" font-family="Liberation Sans" font-size="8" fill="#222">PCA</text><rect x="1" y="11" width="22" height="12" fill="#333"/><rect x="13" y="12" width="9" height="10" fill="#fff"/><ellipse cx="7" cy="17" rx="2.5" ry="4" fill="#fff"/><ellipse cx="17.5" cy="17" rx="2.5" ry="4" fill="#333"/></svg>
<svg style="left:1357px;top:89px" width="24" height="24" viewBox="0 0 24 24" ><path d="M2 6L8 2H21L23 5L17 9H4Z" fill="#40c8e0" stroke="#000" stroke-width="1.5"/><path d="M2 12L8 8H21L23 11L17 15H4Z" fill="#e8f020" stroke="#000" stroke-width="1.5"/><path d="M2 18L8 14H21L23 17L17 21H4Z" fill="#20e020" stroke="#000" stroke-width="1.5"/><path d="M12 0V24" stroke="#e01010" stroke-width="1.3"/></svg>
<svg style="left:1389px;top:89px" width="24" height="24" viewBox="0 0 24 24" ><path d="M1 22V15L8 9L22 18V22Z" fill="#10e010" stroke="#000" stroke-width="1.5"/><circle cx="18" cy="5" r="3" fill="#ffee10"/><path d="M18 0V10M13 5H23M14.5 1.5L21.5 8.5M21.5 1.5L14.5 8.5" stroke="#ffee10" stroke-width="1"/></svg>
<svg style="left:1422px;top:89px" width="24" height="24" viewBox="0 0 24 24" ><rect x="1" y="0" width="23" height="24" fill="#fff"/><circle cx="14" cy="12" r="11" fill="#1a9a7a"/><rect x="5" y="9" width="16" height="6" fill="#fff" opacity="0.85"/></svg>
<svg style="left:1455px;top:89px" width="24" height="24" viewBox="0 0 24 24" ><path d="M2 12L12 4L22 12L12 21Z" fill="#2e5560"/><path d="M2 10L12 2L22 10L12 18Z" fill="#7fb8c8"/><path d="M8 15Q6 8 15 3Q20 9 14 15Z" fill="#98d060"/><path d="M5 16Q4 12 8 10Q11 13 9 16Z" fill="#6ab040"/></svg>
<svg style="left:1488px;top:89px" width="24" height="24" viewBox="0 0 24 24" ><path d="M2 1V23H23" fill="none" stroke="#1a40c0" stroke-width="1.3"/><path d="M2 23H23" stroke="#1a9a40" stroke-width="1.3"/><path d="M5 17Q7 5 11 11Q15 17 18 10Q20 4 23 1" fill="none" stroke="#c01818" stroke-width="1.6"/></svg>
<svg style="left:1527px;top:93px" width="4" height="17"><rect x="0" y="0" width="1" height="1" fill="#b4b4b4"/><rect x="0" y="3" width="1" height="1" fill="#b4b4b4"/><rect x="0" y="6" width="1" height="1" fill="#b4b4b4"/><rect x="0" y="9" width="1" height="1" fill="#b4b4b4"/><rect x="0" y="12" width="1" height="1" fill="#b4b4b4"/><rect x="0" y="15" width="1" height="1" fill="#b4b4b4"/><rect x="3" y="0" width="1" height="1" fill="#b4b4b4"/><rect x="3" y="3" width="1" height="1" fill="#b4b4b4"/><rect x="3" y="6" width="1" height="1" fill="#b4b4b4"/><rect x="3" y="9" width="1" height="1" fill="#b4b4b4"/><rect x="3" y="12" width="1" height="1" fill="#b4b4b4"/><rect x="3" y="15" width="1" height="1" fill="#b4b4b4"/></svg>
<svg style="left:1536px;top:89px" width="24" height="24" viewBox="0 0 24 24" ><rect x="1" y="1" width="21" height="20" fill="#fff" stroke="#4a88c8" stroke-width="1.2"/><rect x="2" y="2" width="19" height="3" fill="#f8d878"/><path d="M1 8H22M1 12H22M1 16H22M7 2V21M13 2V21" stroke="#a8c8e8" stroke-width="0.8"/><path d="M8 15Q8 8 15 9V6L21 11L15 15V12Q11 12 8 15Z" fill="#78c030"/><path d="M21 14Q21 21 14 20V23L8 18L14 14V17Q18 17 21 14Z" fill="#60b020"/></svg>
<svg style="left:1570px;top:89px" width="24" height="24" viewBox="0 0 24 24" ><rect x="0" y="1" width="23" height="23" rx="3" fill="#f8d040"/><text x="1" y="11" font-family="Liberation Sans" font-weight="bold" font-size="11" fill="#f00000">NN</text><text x="1.5" y="22" font-family="Liberation Sans" font-weight="bold" font-size="9.5" fill="#e00000">Join</text></svg>
<svg style="left:5px;top:132px" width="4" height="17"><rect x="0" y="0" width="1" height="1" fill="#b4b4b4"/><rect x="0" y="3" width="1" height="1" fill="#b4b4b4"/><rect x="0" y="6" width="1" height="1" fill="#b4b4b4"/><rect x="0" y="9" width="1" height="1" fill="#b4b4b4"/><rect x="0" y="12" width="1" height="1" fill="#b4b4b4"/><rect x="0" y="15" width="1" height="1" fill="#b4b4b4"/><rect x="3" y="0" width="1" height="1" fill="#b4b4b4"/><rect x="3" y="3" width="1" height="1" fill="#b4b4b4"/><rect x="3" y="6" width="1" height="1" fill="#b4b4b4"/><rect x="3" y="9" width="1" height="1" fill="#b4b4b4"/><rect x="3" y="12" width="1" height="1" fill="#b4b4b4"/><rect x="3" y="15" width="1" height="1" fill="#b4b4b4"/></svg>
<svg style="left:17px;top:128px" width="24" height="24" viewBox="0 0 24 24" ><path d="M1 1L22 23H1Z" fill="#e8e4dc" stroke="#c8c4bc" stroke-width="0.8"/><path d="M5 14L11 20H5Z" fill="#fff" stroke="#c8c4bc" stroke-width="0.6"/><rect x="15" y="1" width="6" height="22" fill="#ece8de" stroke="#c8c4bc" stroke-width="0.6"/></svg>
<svg style="left:50px;top:128px" width="24" height="24" viewBox="0 0 24 24" ><circle cx="6" cy="10" r="3.5" fill="#dadada" stroke="#ccc"/><circle cx="14" cy="4" r="3.5" fill="#dadada" stroke="#ccc"/><rect x="13" y="13" width="11" height="11" rx="1.5" fill="#c9c9c9"/><circle cx="18.5" cy="18.5" r="2.2" fill="none" stroke="#fff" stroke-width="1.3"/></svg>
<svg style="left:80px;top:138px" width="8" height="5"><path d="M0 0H8L4 4Z" fill="#888"/></svg>
<svg style="left:96px;top:128px" width="24" height="24" viewBox="0 0 24 24" ><path d="M3 3Q8 0 13 3Q17 5 21 3Q24 5 22 10Q19 13 14 11Q8 9 4 11Q1 8 3 3Z" fill="#dcdcda" stroke="#c8c8c4" stroke-width="0.8"/><rect x="13" y="13" width="11" height="11" rx="1.5" fill="#c9c9c9"/><circle cx="18.5" cy="18.5" r="2.2" fill="none" stroke="#fff" stroke-width="1.3"/></svg>
<svg style="left:129px;top:128px" width="24" height="24" viewBox="0 0 24 24" ><path d="M3 3Q8 0 13 3Q17 5 21 3Q24 5 22 10Q19 13 14 11Q8 9 4 11Q1 8 3 3Z" fill="#dcdcda" stroke="#c8c8c4" stroke-width="0.8"/><rect x="13" y="13" width="11" height="11" rx="1.5" fill="#c9c9c9"/><circle cx="18.5" cy="18.5" r="2.2" fill="none" stroke="#fff" stroke-width="1.3"/></svg>
<svg style="left:162px;top:128px" width="24" height="24" viewBox="0 0 24 24" ><circle cx="9" cy="8" r="7" fill="#dcdcda" stroke="#c8c8c4"/><path d="M12 11L18 9L23 14L18 23L12 21L9 16Z" fill="#e4e4e8" stroke="#cfcfd4" stroke-width="0.7"/></svg>
<svg style="left:194px;top:128px" width="24" height="24" viewBox="0 0 24 24" ><path d="M3 3Q8 0 13 3Q17 5 21 3Q24 5 22 10Q19 13 14 11Q8 9 4 11Q1 8 3 3Z" fill="#dcdcda" stroke="#c8c8c4" stroke-width="0.8"/><ellipse cx="9" cy="5" rx="4" ry="2" fill="#fff" stroke="#c8c8c4" stroke-width="0.6"/><rect x="13" y="13" width="10" height="10" rx="1.5" fill="#c8c4b8"/><path d="M18.0 14.4V21.6M14.88 16.20L21.12 19.80M14.88 19.80L21.12 16.20" stroke="#fff" stroke-width="1.35"/><circle cx="18.0" cy="18.0" r="1.3" fill="#c8c4b8" stroke="#fff" stroke-width="1"/></svg>
<svg style="left:227px;top:128px" width="24" height="24" viewBox="0 0 24 24" ><path d="M3 3Q8 0 13 3Q17 5 21 3Q24 5 22 10Q19 13 14 11Q8 9 4 11Q1 8 3 3Z" fill="#dcdcda" stroke="#c8c8c4" stroke-width="0.8"/><rect x="13" y="13" width="10" height="10" rx="1.5" fill="#c8c4b8"/><path d="M18.0 14.4V21.6M14.88 16.20L21.12 19.80M14.88 19.80L21.12 16.20" stroke="#fff" stroke-width="1.35"/><circle cx="18.0" cy="18.0" r="1.3" fill="#c8c4b8" stroke="#fff" stroke-width="1"/></svg>
<svg style="left:260px;top:128px" width="24" height="24" viewBox="0 0 24 24" ><path d="M3 3Q8 0 13 3Q17 5 21 3Q24 5 22 10Q19 13 14 11Q8 9 4 11Q1 8 3 3Z" fill="#dcdcda" stroke="#c8c8c4" stroke-width="0.8"/><ellipse cx="9" cy="5" rx="4" ry="2" fill="#fff" stroke="#c8c8c4" stroke-width="0.6"/><rect x="13" y="13" width="10" height="10" rx="1.5" fill="#ede4e4"/><path d="M15.5 15.5L20.5 20.5M20.5 15.5L15.5 20.5" stroke="#fff" stroke-width="1.8"/></svg>
<svg style="left:293px;top:128px" width="24" height="24" viewBox="0 0 24 24" ><path d="M3 3Q8 0 13 3Q17 5 21 3Q24 5 22 10Q19 13 14 11Q8 9 4 11Q1 8 3 3Z" fill="#dcdcda" stroke="#c8c8c4" stroke-width="0.8"/><path d="M2 21Q3 17 7 15Q10 14 9 18Q6 22 2 21Z" fill="#dcdcda" stroke="#c8c8c4" stroke-width="0.6"/><rect x="13" y="13" width="10" height="10" rx="1.5" fill="#ede4e4"/><path d="M15.5 15.5L20.5 20.5M20.5 15.5L15.5 20.5" stroke="#fff" stroke-width="1.8"/></svg>
<svg style="left:326px;top:128px" width="24" height="24" viewBox="0 0 24 24" ><path d="M3 3Q8 0 13 3Q17 5 21 3Q24 5 22 10Q19 13 14 11Q8 9 4 11Q1 8 3 3Z" fill="#dcdcda" stroke="#c8c8c4" stroke-width="0.8"/><path d="M2 21Q3 17 7 15Q10 14 9 18Q6 22 2 21Z" fill="#dcdcda" stroke="#c8c8c4" stroke-width="0.6"/><rect x="13" y="13" width="10" height="10" rx="1.5" fill="#ede4e4"/><path d="M15.5 15.5L20.5 20.5M20.5 15.5L15.5 20.5" stroke="#fff" stroke-width="1.8"/></svg>
<svg style="left:359px;top:128px" width="24" height="24" viewBox="0 0 24 24" ><path d="M3 5Q10 0 15 4Q20 2 22 6Q22 10 16 11Q12 11 10 16Q7 24 4 20Q1 12 3 5Z" fill="#dcdcda" stroke="#c8c8c4" stroke-width="0.8"/></svg>
<svg style="left:392px;top:128px" width="24" height="24" viewBox="0 0 24 24" ><path d="M3 17Q1 11 8 7Q14 1 19 2Q24 5 21 11Q16 18 10 21Q5 23 3 17Z" fill="#e0e0dc" stroke="#cfcfc8" stroke-width="2"/></svg>
<svg style="left:424px;top:128px" width="24" height="24" viewBox="0 0 24 24" ><rect x="1" y="1" width="3" height="3" fill="none" stroke="#ccc"/><rect x="13" y="3" width="3" height="3" fill="none" stroke="#ccc"/><rect x="19" y="3" width="3" height="3" fill="none" stroke="#ccc"/><path d="M3 4L8 13L13 5H19" stroke="#ccc" fill="none"/><rect x="12" y="13" width="11" height="11" rx="2" fill="#ccc"/><circle cx="17.5" cy="18.5" r="3" fill="none" stroke="#fff" stroke-width="1.2"/></svg>
<svg style="left:457px;top:128px" width="24" height="24" viewBox="0 0 24 24" ><path d="M10 0V22M2 12H24" stroke="#d0d0d0" stroke-width="1.2"/><circle cx="10" cy="12" r="2" fill="#fff" stroke="#ccc"/><rect x="14" y="10" width="4" height="4" fill="#fff" stroke="#ccc"/><rect x="16" y="1" width="7" height="6" fill="#ddd9cc"/><rect x="1" y="17" width="6" height="6" fill="#ede4e4"/></svg>
<svg style="left:491px;top:128px" width="24" height="24" viewBox="0 0 24 24" ><circle cx="6" cy="7" r="6" fill="#dcdcda" stroke="#c8c8c4" stroke-width="0.6"/><circle cx="18" cy="7" r="5.5" fill="#dcdcda" stroke="#c8c8c4" stroke-width="0.6"/><path d="M12 2L9 22M13 2L14 22" stroke="#ccc"/><circle cx="8" cy="20" r="3" fill="none" stroke="#d8c8c8"/><circle cx="15" cy="20" r="3" fill="none" stroke="#d8c8c8"/></svg>
<svg style="left:524px;top:128px" width="24" height="24" viewBox="0 0 24 24" ><circle cx="6" cy="7" r="6" fill="#dcdcda" stroke="#c8c8c4" stroke-width="0.6"/><circle cx="18" cy="7" r="5.5" fill="#dcdcda" stroke="#c8c8c4" stroke-width="0.6"/><path d="M12 2L9 22M13 2L14 22" stroke="#ccc"/><circle cx="8" cy="20" r="3" fill="none" stroke="#d8c8c8"/><circle cx="15" cy="20" r="3" fill="none" stroke="#d8c8c8"/></svg>
<svg style="left:557px;top:128px" width="24" height="24" viewBox="0 0 24 24" ><circle cx="6" cy="7" r="6" fill="#dcdcda" stroke="#c8c8c4" stroke-width="0.6"/><circle cx="18" cy="7" r="5.5" fill="#dcdcda" stroke="#c8c8c4" stroke-width="0.6"/><path d="M10 6H16M10 9H16M5 13Q8 19 13 22" stroke="#bbb" stroke-width="0.8" fill="none"/></svg>
<svg style="left:590px;top:128px" width="24" height="24" viewBox="0 0 24 24" ><path d="M1 1H21M1 5H21M1 9H21M1 13H21M1 17H21M1 21H21" stroke="#d8d8d8"/><path d="M10 1V21M7 4Q10 1 13 4M7 12Q10 9 13 12M7 18Q10 15 13 18" stroke="#bbb" fill="none" stroke-width="0.8"/></svg>
<svg style="left:623px;top:128px" width="24" height="24" viewBox="0 0 24 24" ><path d="M8 6Q2 11 7 20" fill="none" stroke="#ccc" stroke-width="0.9"/><path d="M7 4L9 7L6 8" fill="none" stroke="#ccc"/><path d="M10 0L17 5L10 10Z" fill="#dadad6" stroke="#ccc" stroke-width="0.6"/><path d="M10 0V14M10 13L5 22H15Z" fill="none" stroke="#ddd"/></svg>
<svg style="left:653px;top:138px" width="8" height="5"><path d="M0 0H8L4 4Z" fill="#888"/></svg>
<svg style="left:5px;top:171px" width="4" height="17"><rect x="0" y="0" width="1" height="1" fill="#b4b4b4"/><rect x="0" y="3" width="1" height="1" fill="#b4b4b4"/><rect x="0" y="6" width="1" height="1" fill="#b4b4b4"/><rect x="0" y="9" width="1" height="1" fill="#b4b4b4"/><rect x="0" y="12" width="1" height="1" fill="#b4b4b4"/><rect x="0" y="15" width="1" height="1" fill="#b4b4b4"/><rect x="3" y="0" width="1" height="1" fill="#b4b4b4"/><rect x="3" y="3" width="1" height="1" fill="#b4b4b4"/><rect x="3" y="6" width="1" height="1" fill="#b4b4b4"/><rect x="3" y="9" width="1" height="1" fill="#b4b4b4"/><rect x="3" y="12" width="1" height="1" fill="#b4b4b4"/><rect x="3" y="15" width="1" height="1" fill="#b4b4b4"/></svg>
<svg style="left:17px;top:167px" width="24" height="24" viewBox="0 0 24 24" ><rect x="1" y="1" width="20" height="19" fill="none" stroke="#bbb" stroke-dasharray="1.5 1.5"/><rect x="2" y="2" width="13" height="13" fill="#e2e2da"/><path d="M10 9L10 22L13.5 19L16 24L18 23L16 18H21Z" fill="#fff" stroke="#ccc" stroke-width="0.8"/></svg>
<svg style="left:47px;top:177px" width="8" height="5"><path d="M0 0H8L4 4Z" fill="#999"/></svg>
<svg style="left:64px;top:167px" width="24" height="24" viewBox="0 0 24 24" ><path d="M2 2H20V22Z" fill="none" stroke="#ddd" stroke-width="0.6"/><path d="M2 2V22H20Z" fill="#e6e3dc" stroke="#d8d4cc" stroke-width="0.6"/></svg>
<svg style="left:92px;top:177px" width="8" height="5"><path d="M0 0H8L4 4Z" fill="#999"/></svg>
<svg style="left:108px;top:167px" width="24" height="24" viewBox="0 0 24 24" ><rect x="1" y="1" width="14" height="13" fill="#fde35a" stroke="#c9a200" stroke-width="1.3"/><rect x="5" y="5" width="14" height="13" fill="#fde35a" stroke="#c9a200" stroke-width="1.3"/><rect x="12" y="12" width="11" height="11" rx="2" fill="#d01818"/><circle cx="17.5" cy="17.5" r="3.2" fill="none" stroke="#fff" stroke-width="1.1"/><path d="M15.5 19.5L19.5 15.5" stroke="#fff" stroke-width="1.1"/></svg>
<svg style="left:137px;top:177px" width="8" height="5"><path d="M0 0H8L4 4Z" fill="#444"/></svg>
<svg style="left:152px;top:167px" width="24" height="24" viewBox="0 0 24 24" ><rect x="1" y="1" width="13" height="13" fill="#fde35a" stroke="#c9a200" stroke-width="1.3"/><path d="M18 21L14.5 14Q14 10 18 10Q22 10 21.5 14Z" fill="#5a7f9f"/><circle cx="18" cy="13.5" r="1.3" fill="#fff"/></svg>
<svg style="left:191px;top:171px" width="4" height="17"><rect x="0" y="0" width="1" height="1" fill="#b4b4b4"/><rect x="0" y="3" width="1" height="1" fill="#b4b4b4"/><rect x="0" y="6" width="1" height="1" fill="#b4b4b4"/><rect x="0" y="9" width="1" height="1" fill="#b4b4b4"/><rect x="0" y="12" width="1" height="1" fill="#b4b4b4"/><rect x="0" y="15" width="1" height="1" fill="#b4b4b4"/><rect x="3" y="0" width="1" height="1" fill="#b4b4b4"/><rect x="3" y="3" width="1" height="1" fill="#b4b4b4"/><rect x="3" y="6" width="1" height="1" fill="#b4b4b4"/><rect x="3" y="9" width="1" height="1" fill="#b4b4b4"/><rect x="3" y="12" width="1" height="1" fill="#b4b4b4"/><rect x="3" y="15" width="1" height="1" fill="#b4b4b4"/></svg>
<svg style="left:200px;top:167px" width="24" height="24" viewBox="0 0 24 24" ><rect x="1" y="1" width="21" height="12" fill="none" stroke="#ccc" stroke-width="0.8"/><path d="M1 1L11 13M11 1L1 13M1 13V23H11V13M1 18H11M6 13V23" stroke="#ccc" stroke-width="0.8" fill="none"/><path d="M6 23L9 15L19 1L22 3L13 17Z" fill="#e8e4e0" stroke="#ccc" stroke-width="0.7"/></svg>
<svg style="left:235px;top:167px" width="24" height="24" viewBox="0 0 24 24" ><rect x="1" y="1" width="17" height="17" fill="#e2e0d8" stroke="#ccc" stroke-width="0.7"/><path d="M1 9H18M9 1V18" stroke="#fff" stroke-width="0.8"/><path d="M6 10L6 22L9.5 19L12 24L14 23L12 18H17Z" fill="#fff" stroke="#ccc" stroke-width="0.8"/></svg>
<svg style="left:264px;top:177px" width="8" height="5"><path d="M0 0H8L4 4Z" fill="#999"/></svg>
<svg style="left:279px;top:167px" width="24" height="24" viewBox="0 0 24 24" ><rect x="1" y="2" width="8" height="8" fill="none" stroke="#ccc"/><path d="M1 2L9 10M9 2L1 10" stroke="#ccc" stroke-width="0.6"/><rect x="1" y="14" width="8" height="8" fill="none" stroke="#ccc"/><path d="M1 14L9 22M9 14L1 22" stroke="#ccc" stroke-width="0.6"/><path d="M16 1L20 5L16 9L12 5Z" fill="none" stroke="#ccc"/><text x="12" y="22" font-family="Liberation Serif" font-size="13" fill="#ccc">ε</text></svg>
<svg style="left:312px;top:167px" width="24" height="24" viewBox="0 0 24 24" ><path d="M2 3L12 3L22 3L20 22H4Z M2 3L8 14L12 3L16 14L22 3M4 22L8 14L16 14L20 22" fill="none" stroke="#d0ccc4" stroke-width="0.9"/></svg>
<svg style="left:342px;top:177px" width="8" height="5"><path d="M0 0H8L4 4Z" fill="#999"/></svg>
<svg style="left:363px;top:171px" width="4" height="17"><rect x="0" y="0" width="1" height="1" fill="#b4b4b4"/><rect x="0" y="3" width="1" height="1" fill="#b4b4b4"/><rect x="0" y="6" width="1" height="1" fill="#b4b4b4"/><rect x="0" y="9" width="1" height="1" fill="#b4b4b4"/><rect x="0" y="12" width="1" height="1" fill="#b4b4b4"/><rect x="0" y="15" width="1" height="1" fill="#b4b4b4"/><rect x="3" y="0" width="1" height="1" fill="#b4b4b4"/><rect x="3" y="3" width="1" height="1" fill="#b4b4b4"/><rect x="3" y="6" width="1" height="1" fill="#b4b4b4"/><rect x="3" y="9" width="1" height="1" fill="#b4b4b4"/><rect x="3" y="12" width="1" height="1" fill="#b4b4b4"/><rect x="3" y="15" width="1" height="1" fill="#b4b4b4"/></svg>
<svg style="left:373px;top:167px" width="24" height="24" viewBox="0 0 24 24" ><path d="M1 2H11L14 8L19 11" fill="none" stroke="#2f5a90" stroke-width="0.9"/><circle cx="1.5" cy="2" r="1" fill="#fff" stroke="#2f5a90" stroke-width="0.6"/><text x="0" y="21" font-family="Liberation Sans" font-weight="bold" font-size="15" fill="#5a8ac8" stroke="#2f5a90" stroke-width="0.6">A</text><path d="M18 0L19 3H22L19.5 5L20.5 8L18 6L15.5 8L16.5 5L14 3H17Z" fill="#4a7ec0"/><rect x="14" y="14" width="10" height="10" rx="1.5" fill="#c9a200"/><path d="M19.0 15.4V22.6M15.88 17.20L22.12 20.80M15.88 20.80L22.12 17.20" stroke="#fff" stroke-width="1.35"/><circle cx="19.0" cy="19.0" r="1.3" fill="#c9a200" stroke="#fff" stroke-width="1"/></svg>
<svg style="left:402px;top:177px" width="8" height="5"><path d="M0 0H8L4 4Z" fill="#555"/></svg>
<svg style="left:417px;top:167px" width="24" height="24" viewBox="0 0 24 24" ><rect x="1" y="1" width="17" height="17" fill="none" stroke="#333" stroke-width="0.8" stroke-dasharray="1 1"/><path d="M4 1L4 19L8 15L11 22L14 21L11 14H17Z" fill="#fff" stroke="#111" stroke-width="1"/></svg>
<svg style="left:450px;top:167px" width="24" height="24" viewBox="0 0 24 24" ><path d="M3 2H18L11 19L3 14Z" fill="none" stroke="#222" stroke-width="1.2"/><circle cx="3" cy="2" r="2.2" fill="#2a7af0"/><circle cx="18" cy="2" r="2.2" fill="#2a7af0"/><circle cx="11" cy="19" r="2.2" fill="#2a7af0"/><circle cx="3" cy="14" r="2.2" fill="#2a7af0"/><rect x="14" y="14" width="10" height="10" rx="1.5" fill="#5a9a5a"/><path d="M19.0 15.8V22.2M15.8 19.0H22.2" stroke="#fff" stroke-width="2"/></svg>
<svg style="left:485px;top:167px" width="24" height="24" viewBox="0 0 24 24" ><path d="M19 2H5L2 9L7 19" fill="none" stroke="#222" stroke-width="1.2"/><circle cx="19" cy="2" r="2.2" fill="#2a7af0"/><circle cx="5" cy="2" r="2.2" fill="#2a7af0"/><circle cx="2" cy="9" r="2.2" fill="#2a7af0"/><circle cx="7" cy="19" r="2.2" fill="#2a7af0"/><rect x="14" y="14" width="10" height="10" rx="1.5" fill="#5a9a5a"/><path d="M19.0 15.8V22.2M15.8 19.0H22.2" stroke="#fff" stroke-width="2"/></svg>
<svg style="left:518px;top:167px" width="24" height="24" viewBox="0 0 24 24" ><path d="M10 2L12.5 8.5H19L14 12.5L16 19L10 15L4 19L6 12.5L1 8.5H7.5Z" fill="#fce6a8" stroke="#e0a060" stroke-width="0.8"/><rect x="14" y="14" width="10" height="10" rx="1.5" fill="#5a9a5a"/><path d="M19.0 15.8V22.2M15.8 19.0H22.2" stroke="#fff" stroke-width="2"/></svg>
<svg style="left:551px;top:167px" width="24" height="24" viewBox="0 0 24 24" ><text x="3" y="15" font-family="Liberation Serif" font-weight="bold" font-size="14" fill="#222">T</text><rect x="1" y="16" width="3" height="3" fill="#aaa"/><rect x="13" y="13" width="10" height="10" rx="1.5" fill="#5a9a5a"/><path d="M18.0 14.8V21.2M14.8 18.0H21.2" stroke="#fff" stroke-width="2"/></svg>
<div style="position:absolute;left:582px;top:170px;width:1px;height:18px;background:#d2d2d2"></div>
<svg style="left:591px;top:167px" width="24" height="24" viewBox="0 0 24 24" ><rect x="1" y="1" width="21" height="15" fill="#e8f0f4" stroke="#888" stroke-width="0.8"/><path d="M2 22L8 16H5Z" fill="#e8f0f4" stroke="#999" stroke-width="0.8"/><text x="6" y="13" font-family="Liberation Serif" font-weight="bold" font-size="13" fill="#222">T</text></svg>
<svg style="left:620px;top:177px" width="8" height="5"><path d="M0 0H8L4 4Z" fill="#444"/></svg>
<svg style="left:641px;top:171px" width="4" height="17"><rect x="0" y="0" width="1" height="1" fill="#b4b4b4"/><rect x="0" y="3" width="1" height="1" fill="#b4b4b4"/><rect x="0" y="6" width="1" height="1" fill="#b4b4b4"/><rect x="0" y="9" width="1" height="1" fill="#b4b4b4"/><rect x="0" y="12" width="1" height="1" fill="#b4b4b4"/><rect x="0" y="15" width="1" height="1" fill="#b4b4b4"/><rect x="3" y="0" width="1" height="1" fill="#b4b4b4"/><rect x="3" y="3" width="1" height="1" fill="#b4b4b4"/><rect x="3" y="6" width="1" height="1" fill="#b4b4b4"/><rect x="3" y="9" width="1" height="1" fill="#b4b4b4"/><rect x="3" y="12" width="1" height="1" fill="#b4b4b4"/><rect x="3" y="15" width="1" height="1" fill="#b4b4b4"/></svg>
<svg style="left:650px;top:167px" width="24" height="24" viewBox="0 0 24 24" ><path d="M1 1H8L11 4V16H1Z" fill="#fff" stroke="#999" stroke-width="0.8"/><circle cx="6" cy="9" r="1.7" fill="#f07070"/><path d="M9 7H16L19 10V22H9Z" fill="#fff" stroke="#555" stroke-width="0.9"/><circle cx="14" cy="15" r="1.7" fill="#e00000"/></svg>
<svg style="left:684px;top:167px" width="24" height="24" viewBox="0 0 24 24" ><rect x="1" y="1" width="23" height="23" fill="#9fd48a"/><path d="M3 5Q8 10 6 20M15 1Q18 10 22 15" stroke="#c8e0f0" stroke-width="0.8" fill="none"/><path d="M7 13L12 7L15 2L20 7L14 11L9 15Z" fill="#e01818"/><path d="M9 14L6 20" stroke="#333" stroke-width="1.2"/></svg>
<svg style="left:716px;top:167px" width="24" height="24" viewBox="0 0 24 24" ><path d="M9.100000000000001 13.899999999999999L3 22" stroke="#222" stroke-width="3"/><path d="M8.75 14.25L3.2 21.8" stroke="#f2c94c" stroke-width="2"/><circle cx="14" cy="9" r="7" fill="#f6f6f6" stroke="#8a8a8a" stroke-width="1"/><circle cx="14" cy="9" r="1.8" fill="#f00"/></svg>
<svg style="left:750px;top:167px" width="24" height="24" viewBox="0 0 24 24" ><path d="M9.100000000000001 13.899999999999999L3 22" stroke="#222" stroke-width="3"/><path d="M8.75 14.25L3.2 21.8" stroke="#f2c94c" stroke-width="2"/><circle cx="14" cy="9" r="7" fill="#f6f6f6" stroke="#8a8a8a" stroke-width="1"/><circle cx="14" cy="9" r="1.8" fill="#f00"/><circle cx="3" cy="2" r="1.6" fill="#f00"/><circle cx="13" cy="21" r="1.6" fill="#f00"/><circle cx="20" cy="20" r="1.6" fill="#f00"/></svg>
<svg style="left:784px;top:167px" width="24" height="24" viewBox="0 0 24 24" ><rect x="2" y="2" width="20" height="20" fill="#c8e8a8" stroke="#444" stroke-width="1.2"/><path d="M7 3L17 21M3 12H21" stroke="#fff" stroke-width="0.7"/><circle cx="12" cy="12" r="2.4" fill="#f00"/><circle cx="2" cy="2" r="2" fill="#fff" stroke="#555" stroke-width="0.8"/><circle cx="22" cy="2" r="2" fill="#fff" stroke="#555" stroke-width="0.8"/><circle cx="2" cy="22" r="2" fill="#fff" stroke="#555" stroke-width="0.8"/><circle cx="22" cy="22" r="2" fill="#fff" stroke="#555" stroke-width="0.8"/></svg>
<svg style="left:813px;top:177px" width="8" height="5"><path d="M0 0H8L4 4Z" fill="#444"/></svg>
<svg style="left:828px;top:167px" width="24" height="24" viewBox="0 0 24 24" ><path d="M1 10Q12 -3 23 10Q23 20 12 22Q1 20 1 10Z" fill="#fff" stroke="#666" stroke-width="1.5"/><path d="M1 10H23M3 15H21M6 4Q12 10 12 22M18 4Q12 10 12 22M8 3Q4 12 8 21M16 3Q20 12 16 21" fill="none" stroke="#666" stroke-width="1.2"/></svg>
<svg style="left:861px;top:167px" width="24" height="24" viewBox="0 0 24 24" ><text x="2" y="11" font-family="Liberation Sans" font-weight="bold" font-size="10" fill="#ddd">X,Y</text><circle cx="5" cy="18" r="2" fill="#ddd"/><rect x="12" y="12" width="11" height="11" rx="1.5" fill="#c8c4b8"/><path d="M17.5 13.54V21.46M14.07 15.52L20.93 19.48M14.07 19.48L20.93 15.52" stroke="#fff" stroke-width="1.35"/><circle cx="17.5" cy="17.5" r="1.3" fill="#c8c4b8" stroke="#fff" stroke-width="1"/></svg>
<svg style="left:894px;top:167px" width="24" height="24" viewBox="0 0 24 24" ><path d="M9 9L22 21" stroke="#555" stroke-width="4.5"/><path d="M10 10L21.5 20.5" stroke="#e8cf7a" stroke-width="3"/><path d="M2 5Q1 1 5 1L4 4L7 6L9 4Q11 8 7 10Q3 10 2 5Z" fill="#ddd" stroke="#666" stroke-width="0.9"/></svg>
<svg style="left:933px;top:171px" width="4" height="17"><rect x="0" y="0" width="1" height="1" fill="#b4b4b4"/><rect x="0" y="3" width="1" height="1" fill="#b4b4b4"/><rect x="0" y="6" width="1" height="1" fill="#b4b4b4"/><rect x="0" y="9" width="1" height="1" fill="#b4b4b4"/><rect x="0" y="12" width="1" height="1" fill="#b4b4b4"/><rect x="0" y="15" width="1" height="1" fill="#b4b4b4"/><rect x="3" y="0" width="1" height="1" fill="#b4b4b4"/><rect x="3" y="3" width="1" height="1" fill="#b4b4b4"/><rect x="3" y="6" width="1" height="1" fill="#b4b4b4"/><rect x="3" y="9" width="1" height="1" fill="#b4b4b4"/><rect x="3" y="12" width="1" height="1" fill="#b4b4b4"/><rect x="3" y="15" width="1" height="1" fill="#b4b4b4"/></svg>
<svg style="left:943px;top:167px" width="24" height="24" viewBox="0 0 24 24" ><rect x="0" y="1" width="24" height="14" rx="4" fill="#5b8fc9"/><text x="12" y="12.5" text-anchor="middle" font-family="Liberation Sans" font-weight="bold" font-size="9.5" fill="#fff">KML</text><rect x="15" y="15" width="9" height="9" rx="1.5" fill="#5a9a5a"/><path d="M19.5 16.8V22.2M16.8 19.5H22.2" stroke="#fff" stroke-width="2"/></svg>
<svg style="left:976px;top:167px" width="24" height="24" viewBox="0 0 24 24" ><rect x="0" y="1" width="24" height="14" rx="4" fill="#5b8fc9"/><text x="12" y="12.5" text-anchor="middle" font-family="Liberation Sans" font-weight="bold" font-size="9.5" fill="#fff">KMZ</text><rect x="13" y="14" width="11" height="10" rx="2" fill="#3a5a78"/><path d="M16 16V22M16 19H22" stroke="#fff" stroke-width="1.2"/></svg>
<svg style="left:1009px;top:167px" width="24" height="24" viewBox="0 0 24 24" ><rect x="0" y="1" width="24" height="14" rx="4" fill="#5b8fc9"/><text x="12" y="12.5" text-anchor="middle" font-family="Liberation Sans" font-weight="bold" font-size="8" fill="#fff">HTML</text><rect x="14" y="14" width="10" height="10" rx="1.5" fill="#c9a200"/><path d="M19.0 15.4V22.6M15.88 17.20L22.12 20.80M15.88 20.80L22.12 17.20" stroke="#fff" stroke-width="1.35"/><circle cx="19.0" cy="19.0" r="1.3" fill="#c9a200" stroke="#fff" stroke-width="1"/></svg>
<svg style="left:1042px;top:167px" width="24" height="24" viewBox="0 0 24 24" ><rect x="1" y="1" width="22" height="22" fill="#c0c8d0"/><rect x="1.5" y="1.5" width="9" height="9" fill="#40d060" stroke="#234" stroke-width="0.8"/><rect x="13.5" y="1.5" width="9" height="9" fill="#e0c040" stroke="#234" stroke-width="0.8"/><rect x="1.5" y="13.5" width="9" height="9" fill="#3a8ae0" stroke="#234" stroke-width="0.8"/><rect x="13.5" y="13.5" width="9" height="9" fill="#1a6a2a" stroke="#234" stroke-width="0.8"/><rect x="6.5" y="6.5" width="11" height="11" fill="#b06830" stroke="#234" stroke-width="0.8"/></svg>
<svg style="left:1075px;top:167px" width="24" height="24" viewBox="0 0 24 24" ><path d="M1 3L20 1L23 21L3 23Z" fill="#d8f0b0" stroke="#2a3a5a" stroke-width="1.2"/><path d="M7 3L16 21M2 13L22 10" stroke="#fff" stroke-width="1.3"/><path d="M4 7H9M12 6H18M5 17H10M14 15H19" stroke="#6aa0c8" stroke-width="0.6" stroke-dasharray="1 1"/></svg>
<svg style="left:1114px;top:171px" width="4" height="17"><rect x="0" y="0" width="1" height="1" fill="#b4b4b4"/><rect x="0" y="3" width="1" height="1" fill="#b4b4b4"/><rect x="0" y="6" width="1" height="1" fill="#b4b4b4"/><rect x="0" y="9" width="1" height="1" fill="#b4b4b4"/><rect x="0" y="12" width="1" height="1" fill="#b4b4b4"/><rect x="0" y="15" width="1" height="1" fill="#b4b4b4"/><rect x="3" y="0" width="1" height="1" fill="#b4b4b4"/><rect x="3" y="3" width="1" height="1" fill="#b4b4b4"/><rect x="3" y="6" width="1" height="1" fill="#b4b4b4"/><rect x="3" y="9" width="1" height="1" fill="#b4b4b4"/><rect x="3" y="12" width="1" height="1" fill="#b4b4b4"/><rect x="3" y="15" width="1" height="1" fill="#b4b4b4"/></svg>
<svg style="left:1123px;top:167px" width="24" height="24" viewBox="0 0 24 24" ><rect x="1" y="1" width="23" height="23" fill="#000"/><path d="M11 1H24V24H10L14 21L8 16L20 12L9 8L14 5Z" fill="#fff000"/><path d="M14 21L8 24H24V20Z" fill="#fff"/></svg>
<svg style="left:1162px;top:171px" width="4" height="17"><rect x="0" y="0" width="1" height="1" fill="#b4b4b4"/><rect x="0" y="3" width="1" height="1" fill="#b4b4b4"/><rect x="0" y="6" width="1" height="1" fill="#b4b4b4"/><rect x="0" y="9" width="1" height="1" fill="#b4b4b4"/><rect x="0" y="12" width="1" height="1" fill="#b4b4b4"/><rect x="0" y="15" width="1" height="1" fill="#b4b4b4"/><rect x="3" y="0" width="1" height="1" fill="#b4b4b4"/><rect x="3" y="3" width="1" height="1" fill="#b4b4b4"/><rect x="3" y="6" width="1" height="1" fill="#b4b4b4"/><rect x="3" y="9" width="1" height="1" fill="#b4b4b4"/><rect x="3" y="12" width="1" height="1" fill="#b4b4b4"/><rect x="3" y="15" width="1" height="1" fill="#b4b4b4"/></svg>
<svg style="left:1173px;top:167px" width="24" height="24" viewBox="0 0 24 24" ><rect x="3" y="1" width="21" height="21" fill="#20a0e0"/><rect x="4" y="3" width="8" height="8" fill="#e8d050"/><path d="M6 12L12 4" stroke="#555"/><text x="8" y="13" font-family="Liberation Sans" font-weight="bold" font-size="6" fill="#e01818">Wisc</text><text x="9" y="19" font-family="Liberation Sans" font-weight="bold" font-size="6" fill="#e020e0">SIMS</text><circle cx="5" cy="19" r="4" fill="#10a030"/></svg>
<svg style="left:1212px;top:171px" width="4" height="17"><rect x="0" y="0" width="1" height="1" fill="#b4b4b4"/><rect x="0" y="3" width="1" height="1" fill="#b4b4b4"/><rect x="0" y="6" width="1" height="1" fill="#b4b4b4"/><rect x="0" y="9" width="1" height="1" fill="#b4b4b4"/><rect x="0" y="12" width="1" height="1" fill="#b4b4b4"/><rect x="0" y="15" width="1" height="1" fill="#b4b4b4"/><rect x="3" y="0" width="1" height="1" fill="#b4b4b4"/><rect x="3" y="3" width="1" height="1" fill="#b4b4b4"/><rect x="3" y="6" width="1" height="1" fill="#b4b4b4"/><rect x="3" y="9" width="1" height="1" fill="#b4b4b4"/><rect x="3" y="12" width="1" height="1" fill="#b4b4b4"/><rect x="3" y="15" width="1" height="1" fill="#b4b4b4"/></svg>
<svg style="left:1221px;top:167px" width="24" height="24" viewBox="0 0 24 24" ><path d="M2 1V22H23" fill="none" stroke="#777" stroke-width="1.3"/><path d="M0 4L2 1L4 4M20 20L23 22L20 24" fill="none" stroke="#777" stroke-width="1.2"/><path d="M4 14Q10 12 12 9Q14 3 19 3" fill="none" stroke="#b020a0" stroke-width="1.4"/><path d="M4 18Q9 17 12 15Q16 13 19 15" fill="none" stroke="#30a0c0" stroke-width="1.4"/></svg>
<svg style="left:1261px;top:171px" width="4" height="17"><rect x="0" y="0" width="1" height="1" fill="#b4b4b4"/><rect x="0" y="3" width="1" height="1" fill="#b4b4b4"/><rect x="0" y="6" width="1" height="1" fill="#b4b4b4"/><rect x="0" y="9" width="1" height="1" fill="#b4b4b4"/><rect x="0" y="12" width="1" height="1" fill="#b4b4b4"/><rect x="0" y="15" width="1" height="1" fill="#b4b4b4"/><rect x="3" y="0" width="1" height="1" fill="#b4b4b4"/><rect x="3" y="3" width="1" height="1" fill="#b4b4b4"/><rect x="3" y="6" width="1" height="1" fill="#b4b4b4"/><rect x="3" y="9" width="1" height="1" fill="#b4b4b4"/><rect x="3" y="12" width="1" height="1" fill="#b4b4b4"/><rect x="3" y="15" width="1" height="1" fill="#b4b4b4"/></svg>
<svg style="left:1271px;top:167px" width="24" height="24" viewBox="0 0 24 24" ><rect x="0" y="0" width="24" height="24" fill="#78b858"/><circle cx="14" cy="9" r="6.5" fill="#90c870" stroke="#fff" stroke-width="1.8"/><path d="M9.5 13.5L3 20" stroke="#fff" stroke-width="3" stroke-linecap="round"/></svg>
<svg style="left:1303px;top:167px" width="24" height="24" viewBox="0 0 24 24" ><rect x="0" y="0" width="21" height="24" fill="#f8d050"/><path d="M10 0Q15 10 10 16Q6 22 0 21" stroke="#3a78d8" stroke-width="2.5" fill="none"/><rect x="1" y="3" width="2" height="12" fill="#a03060"/><path d="M1 3Q5 2 8 4" stroke="#10a030" stroke-width="2"/><path d="M6 18L24 0" stroke="#804010" stroke-width="3" stroke-linecap="round"/></svg>
<svg style="left:774px;top:50px" width="24" height="24" viewBox="0 0 24 24" ><circle cx="11" cy="10" r="8" fill="#6a9bd1" stroke="#5a88c0"/><text x="8.5" y="15" font-family="Liberation Serif" font-style="italic" font-weight="bold" font-size="12" fill="#fff">i</text><path d="M13 13L13 24L16 21L18.5 26L20.5 25L18 20H22Z" fill="#fff" stroke="#333" stroke-width="0.9"/></svg>
<svg style="left:841px;top:50px" width="24" height="24" viewBox="0 0 24 24" ><g transform="translate(12 12)" fill="#7aa7dc" stroke="#4a7ec0" stroke-width="1"><rect x="-2" y="-11" width="4" height="6" rx="2" transform="rotate(0)"/><rect x="-2" y="-11" width="4" height="6" rx="2" transform="rotate(45)"/><rect x="-2" y="-11" width="4" height="6" rx="2" transform="rotate(90)"/><rect x="-2" y="-11" width="4" height="6" rx="2" transform="rotate(135)"/><rect x="-2" y="-11" width="4" height="6" rx="2" transform="rotate(180)"/><rect x="-2" y="-11" width="4" height="6" rx="2" transform="rotate(225)"/><rect x="-2" y="-11" width="4" height="6" rx="2" transform="rotate(270)"/><rect x="-2" y="-11" width="4" height="6" rx="2" transform="rotate(315)"/><circle r="7" /><circle r="2.5" fill="#dfe9f5"/></g></svg>
<div style="position:absolute;left:0px;top:198px;width:51px;height:814px;background:linear-gradient(90deg,#f7f7f7,#efefef)"></div>
<div style="position:absolute;left:51px;top:198px;width:1px;height:814px;background:#a0a0a0"></div>
<svg style="left:19px;top:204px" width="18" height="1"><rect x="0" y="0" width="1" height="1" fill="#b4b4b4"/><rect x="3" y="0" width="1" height="1" fill="#b4b4b4"/><rect x="6" y="0" width="1" height="1" fill="#b4b4b4"/><rect x="9" y="0" width="1" height="1" fill="#b4b4b4"/><rect x="12" y="0" width="1" height="1" fill="#b4b4b4"/><rect x="15" y="0" width="1" height="1" fill="#b4b4b4"/></svg>
<svg style="left:8px;top:213px" width="24" height="24" viewBox="0 0 24 24" ><path d="M3 2L10.5 20L17 4L22 4" fill="none" stroke="#2b3d5a" stroke-width="1.2"/><path d="M3 0.5L4.5 2L3 3.5L1.5 2ZM17 2.5L18.5 4L17 5.5L15.5 4ZM22 2.5L23.5 4L22 5.5L20.5 4Z" fill="#fff" stroke="#2b3d5a" stroke-width="0.7"/><circle cx="10.5" cy="20" r="1.5" fill="#fff" stroke="#2b3d5a" stroke-width="0.7"/><rect x="14" y="14" width="10" height="10" rx="1.5" fill="#5a9a5a"/><path d="M19.0 15.8V22.2M15.8 19.0H22.2" stroke="#fff" stroke-width="2"/></svg>
<svg style="left:8px;top:245px" width="24" height="24" viewBox="0 0 24 24" ><rect x="2" y="1" width="6" height="6" fill="#2a4a70"/><rect x="8" y="1" width="6" height="6" fill="#6a9bd1"/><rect x="14" y="1" width="6" height="6" fill="#2a4a70"/><rect x="2" y="7" width="6" height="6" fill="#6a9bd1"/><rect x="8" y="7" width="6" height="6" fill="#2a4a70"/><rect x="14" y="7" width="6" height="6" fill="#6a9bd1"/><rect x="2" y="13" width="6" height="6" fill="#2a4a70"/><rect x="8" y="13" width="6" height="6" fill="#6a9bd1"/><rect x="14" y="14" width="10" height="10" rx="1.5" fill="#5a9a5a"/><path d="M19.0 15.8V22.2M15.8 19.0H22.2" stroke="#fff" stroke-width="2"/></svg>
<svg style="left:8px;top:278px" width="24" height="24" viewBox="0 0 24 24" ><rect x="1" y="1" width="21" height="21" fill="#a8c4e6" stroke="#2f4d7a" stroke-width="1"/><path d="M1 12H22M11.5 1V22M1 1L11.5 12M11.5 1L1 12M22 1L11.5 12M1 17H11.5M6 12V22" stroke="#2f4d7a" stroke-width="0.9"/><rect x="14" y="14" width="10" height="10" rx="1.5" fill="#5a9a5a"/><path d="M19.0 15.8V22.2M15.8 19.0H22.2" stroke="#fff" stroke-width="2"/></svg>
<svg style="left:8px;top:310px" width="24" height="24" viewBox="0 0 24 24" ><path d="M8 3Q13 1 14 5Q15 10 7 15Q11 9 9 9Q5 9 5 6Q5 3 8 3Z" fill="#4a7ab8"/><rect x="14" y="14" width="10" height="10" rx="1.5" fill="#5a9a5a"/><path d="M19.0 15.8V22.2M15.8 19.0H22.2" stroke="#fff" stroke-width="2"/></svg>
<svg style="left:8px;top:342px" width="24" height="24" viewBox="0 0 24 24" ><path d="M2 23Q4 12 12 6Q18 2 23 1Q22 7 17 13Q10 20 2 23Z" fill="#7aa0d0" stroke="#4a6f9f" stroke-width="0.8"/><path d="M3 22L20 4" stroke="#cde" stroke-width="0.8"/><rect x="14" y="14" width="10" height="10" rx="1.5" fill="#5a9a5a"/><path d="M19.0 15.8V22.2M15.8 19.0H22.2" stroke="#fff" stroke-width="2"/></svg>
<svg style="left:8px;top:374px" width="24" height="24" viewBox="0 0 24 24" ><rect x="1" y="1" width="22" height="21" rx="2" fill="#b9cde6" stroke="#5a7aa0" stroke-width="0.9"/><path d="M3 2L10 19L17 3L22 2" fill="none" stroke="#2b3d5a" stroke-width="1"/><circle cx="10" cy="19" r="1.5" fill="#fff" stroke="#2b3d5a" stroke-width="0.7"/><rect x="14" y="14" width="10" height="10" rx="1.5" fill="#5a9a5a"/><path d="M19.0 15.8V22.2M15.8 19.0H22.2" stroke="#fff" stroke-width="2"/></svg>
<svg style="left:8px;top:406px" width="24" height="24" viewBox="0 0 24 24" ><path d="M3 3Q8 0 13 2Q19 0 21 4Q22 9 18 12V18Q16 20 14 17L13 12Q7 13 5 9Q1 6 3 3Z" fill="#3a6a9a" stroke="#1a3a60" stroke-width="0.8"/><rect x="14" y="14" width="10" height="10" rx="1.5" fill="#5a9a5a"/><path d="M19.0 15.8V22.2M15.8 19.0H22.2" stroke="#fff" stroke-width="2"/></svg>
<svg style="left:8px;top:438px" width="24" height="24" viewBox="0 0 24 24" ><circle cx="11" cy="10" r="9" fill="#a8c4e6" stroke="#4a6f9f" stroke-width="1"/><path d="M5 7Q9 4 12 8Q16 7 17 10Q14 14 9 12Z" fill="#2b4d7a" opacity="0.6"/><rect x="14" y="14" width="10" height="10" rx="1.5" fill="#5a9a5a"/><path d="M19.0 15.8V22.2M15.8 19.0H22.2" stroke="#fff" stroke-width="2"/></svg>
<svg style="left:8px;top:470px" width="24" height="24" viewBox="0 0 24 24" ><circle cx="11" cy="10" r="9" fill="#2a4a70"/><path d="M2 8H20V12H2ZM8 2Q5 10 8 18H14Q17 10 14 2Z" fill="#6a9bd1"/><rect x="14" y="14" width="10" height="10" rx="1.5" fill="#5a9a5a"/><path d="M19.0 15.8V22.2M15.8 19.0H22.2" stroke="#fff" stroke-width="2"/></svg>
<svg style="left:8px;top:502px" width="24" height="24" viewBox="0 0 24 24" ><circle cx="11" cy="10" r="9" fill="#dde8f5" stroke="#4a7ec0" stroke-width="1"/><path d="M2 10H20M11 1V19M4 5H18M4 15H18" stroke="#6a9bd1" stroke-width="0.8"/><path d="M5 6L10 16L15 6L19 6" fill="none" stroke="#333" stroke-width="1"/><rect x="14" y="14" width="10" height="10" rx="1.5" fill="#5a9a5a"/><path d="M19.0 15.8V22.2M15.8 19.0H22.2" stroke="#fff" stroke-width="2"/></svg>
<svg style="left:8px;top:534px" width="24" height="24" viewBox="0 0 24 24" ><rect x="2" y="7" width="19" height="11" rx="2" fill="#6a9bd1" stroke="#3e6696" stroke-width="0.8"/><path d="M5 3V7M8 3V7M11 3V7M14 3V7M17 3V7M5 18V22M8 18V22M11 18V22M14 18V22M17 18V22" stroke="#2f4d7a" stroke-width="1"/><rect x="14" y="14" width="10" height="10" rx="1.5" fill="#c9a200"/><path d="M19.0 15.4V22.6M15.88 17.20L22.12 20.80M15.88 20.80L22.12 17.20" stroke="#fff" stroke-width="1.35"/><circle cx="19.0" cy="19.0" r="1.3" fill="#c9a200" stroke="#fff" stroke-width="1"/></svg>
<svg style="left:38px;top:417px" width="8" height="5"><path d="M0 0H8L4 4Z" fill="#555"/></svg>
<svg style="left:38px;top:545px" width="8" height="5"><path d="M0 0H8L4 4Z" fill="#555"/></svg>
<div style="position:absolute;left:52px;top:198px;width:477px;height:814px;background:#f0f0f0"></div>
<div class="t" style="left:56px;top:202.67px;font-size:12.2px;">Layers</div>
<svg style="left:496px;top:203px" width="11" height="11" viewBox="0 0 11 11"><rect x="0.5" y="0.5" width="10" height="10" rx="2" fill="none" stroke="#777"/><rect x="2.5" y="4.5" width="4" height="4" fill="none" stroke="#777"/><path d="M4.5 4.5V2.5H8.5V6.5H6.5" fill="none" stroke="#777"/></svg>
<svg style="left:510px;top:203px" width="11" height="11" viewBox="0 0 11 11"><rect x="0.5" y="0.5" width="10" height="10" rx="2" fill="none" stroke="#777"/><path d="M3 3L8 8M8 3L3 8" stroke="#555" stroke-width="1.8"/></svg>
<svg style="left:60.0px;top:224.0px" width="16" height="16" viewBox="0 0 16 16"><path d="M1 9L7 7L9 13L3 15Z" fill="#e84040"/><path d="M2 6L7 4L9 10L3 12Z" fill="#5b8fd0"/><path d="M3 3L8 2L10 8L4 10Z" fill="#f5d030"/><path d="M6 7L10 5L12 9L8 12Z" fill="#d8a860"/><path d="M10 6L15 1" stroke="#c08030" stroke-width="1.8"/></svg>
<svg style="left:85.0px;top:224.0px" width="16" height="16" viewBox="0 0 16 16"><path d="M1 8V15H8" fill="none" stroke="#777"/><rect x="4" y="3" width="9" height="10" fill="none" stroke="#777"/><path d="M7 2V9Q7 11 8.5 11Q10 11 10 9V1" fill="none" stroke="#5b8fd0" stroke-width="1.2"/><rect x="9" y="10" width="6" height="6" rx="1" fill="#5aa85a"/><circle cx="12" cy="13" r="1.5" fill="#fff"/></svg>
<svg style="left:110.0px;top:224.0px" width="16" height="16" viewBox="0 0 16 16"><path d="M1 7Q8 0 15 7Q8 13 1 7Z" fill="#fff" stroke="#999" stroke-width="0.8"/><circle cx="7.5" cy="6.5" r="3.3" fill="#5b8fd0"/><circle cx="7.5" cy="6" r="1.2" fill="#000"/></svg>
<svg style="left:136.0px;top:224.0px" width="16" height="16" viewBox="0 0 16 16"><path d="M1 1H15L10 8V15L6 13V8Z" fill="#6a9bd1" stroke="#4a73a8" stroke-width="0.6"/><rect x="1" y="1" width="14" height="2" fill="#f5e050"/></svg>
<svg style="left:161.0px;top:224.0px" width="16" height="16" viewBox="0 0 16 16"><text x="0" y="11" font-family="Liberation Serif" font-size="13" fill="#ccc">ε</text><rect x="8" y="8" width="7" height="8" rx="1" fill="#e6e6e6"/></svg>
<svg style="left:198.0px;top:224.0px" width="16" height="16" viewBox="0 0 16 16"><path d="M1 1H15M2 1V15M2 7H4M2 13H4" fill="none" stroke="#888" stroke-width="0.9"/><rect x="4" y="4" width="3" height="3" fill="#f08a10"/><rect x="4" y="11" width="3" height="3" fill="#f08a10"/><path d="M9 1H12V9H15L10.5 15L6 9H9Z" fill="#5b8fd0" stroke="#3a6aa0" stroke-width="0.6"/></svg>
<svg style="left:222.0px;top:224.0px" width="16" height="16" viewBox="0 0 16 16"><path d="M1 1H7M2 1V15M2 7H4M2 13H4" fill="none" stroke="#888" stroke-width="0.9"/><rect x="4" y="4" width="3" height="3" fill="#f08a10"/><rect x="4" y="11" width="3" height="3" fill="#f08a10"/><path d="M9 15H12V7H15L10.5 1L6 7H9Z" fill="#5b8fd0" stroke="#3a6aa0" stroke-width="0.6"/></svg>
<svg style="left:247.0px;top:224.0px" width="16" height="16" viewBox="0 0 16 16"><rect x="1" y="1" width="12" height="12" fill="#f4f4f4" stroke="#777" stroke-width="1"/><rect x="9" y="10" width="7" height="5" rx="1.5" fill="#e02020"/><path d="M10.5 12.5H14.5" stroke="#fff" stroke-width="1.2"/></svg>
<svg style="left:122.0px;top:236px" width="6" height="5"><path d="M0 0H6L3.0 4.5Z" fill="#444"/></svg>
<svg style="left:148.0px;top:236px" width="6" height="5"><path d="M0 0H6L3.0 4.5Z" fill="#444"/></svg>
<svg style="left:182.5px;top:231px" width="7" height="5"><path d="M0 0H7L3.5 4.5Z" fill="#aaa"/></svg>
<div style="position:absolute;left:52px;top:249px;width:471px;height:582px;background:#fff;border:1px solid #a8a8a8;box-sizing:border-box"></div>
<div style="position:absolute;left:53px;top:250px;width:469px;height:18px;background:#0078d7"></div>
<svg style="left:59.0px;top:257px" width="8" height="5"><path d="M0 0H8L4.0 4.5Z" fill="#0a2a4a"/></svg>
<svg style="left:76px;top:252px" width="14" height="14" viewBox="0 0 14 14"><rect x="0.5" y="0.5" width="13" height="13" fill="#fff" stroke="#7a7a7a"/><path d="M3 7L6 11L11 2.5" fill="none" stroke="#000" stroke-width="1.8"/></svg>
<svg style="left:96.0px;top:251.0px" width="16" height="16" viewBox="0 0 16 16"><rect x="0" y="0" width="5" height="5" fill="#2a4060"/><rect x="5" y="0" width="5" height="5" fill="#a8c8e8"/><rect x="10" y="0" width="5" height="5" fill="#2a4060"/><rect x="0" y="5" width="5" height="5" fill="#a8c8e8"/><rect x="5" y="5" width="5" height="5" fill="#2a4060"/><rect x="10" y="5" width="5" height="5" fill="#a8c8e8"/><rect x="0" y="10" width="5" height="5" fill="#2a4060"/><rect x="5" y="10" width="5" height="5" fill="#a8c8e8"/><rect x="10" y="10" width="5" height="5" fill="#dce8f4"/></svg>
<div class="t" style="left:118px;top:253.00px;font-size:13px;color:#fff"><u>("B08@1"-"B04@1")/("B08@1"+"B04@1")</u></div>
<div class="t" style="left:96px;top:269.67px;font-size:12.2px;">Band 1</div>
<div style="position:absolute;left:96px;top:284px;width:16px;height:95px;background:linear-gradient(#00441b,#238b45 35%,#74c476 60%,#c7e9c0 80%,#f7fcf5)"></div>
<div class="t" style="left:117px;top:283.67px;font-size:12.2px;">1</div>
<div class="t" style="left:117px;top:367.67px;font-size:12.2px;">0</div>
<svg style="left:59.0px;top:388px" width="8" height="5"><path d="M0 0H8L4.0 4.5Z" fill="#444"/></svg>
<svg style="left:76px;top:383px" width="14" height="14" viewBox="0 0 14 14"><rect x="0.5" y="0.5" width="13" height="13" fill="#fff" stroke="#7a7a7a"/><path d="M3 7L6 11L11 2.5" fill="none" stroke="#000" stroke-width="1.8"/></svg>
<svg style="left:96.0px;top:382.0px" width="16" height="16" viewBox="0 0 16 16"><rect x="0" y="0" width="5" height="5" fill="#2a4060"/><rect x="5" y="0" width="5" height="5" fill="#dce8f4"/><rect x="10" y="0" width="5" height="5" fill="#2a4060"/><rect x="0" y="5" width="5" height="5" fill="#a8c8e8"/><rect x="5" y="5" width="5" height="5" fill="#2a4060"/><rect x="10" y="5" width="5" height="5" fill="#dce8f4"/><rect x="0" y="10" width="5" height="5" fill="#2a4060"/><rect x="5" y="10" width="5" height="5" fill="#a8c8e8"/><rect x="10" y="10" width="5" height="5" fill="#dce8f4"/></svg>
<div class="t" style="left:118px;top:384.00px;font-size:13px;">B08</div>
<div class="t" style="left:96px;top:401.67px;font-size:12.2px;">Band 1 (Gray)</div>
<div style="position:absolute;left:96px;top:416px;width:16px;height:95px;background:linear-gradient(#fff,#000)"></div>
<div class="t" style="left:117px;top:414.67px;font-size:12.2px;">65,535</div>
<div class="t" style="left:117px;top:498.67px;font-size:12.2px;">0</div>
<svg style="left:59.0px;top:519px" width="8" height="5"><path d="M0 0H8L4.0 4.5Z" fill="#444"/></svg>
<svg style="left:76px;top:514px" width="14" height="14" viewBox="0 0 14 14"><rect x="0.5" y="0.5" width="13" height="13" fill="#fff" stroke="#7a7a7a"/><path d="M3 7L6 11L11 2.5" fill="none" stroke="#000" stroke-width="1.8"/></svg>
<svg style="left:96.0px;top:513.0px" width="16" height="16" viewBox="0 0 16 16"><rect x="0" y="0" width="5" height="5" fill="#2a4060"/><rect x="5" y="0" width="5" height="5" fill="#dce8f4"/><rect x="10" y="0" width="5" height="5" fill="#2a4060"/><rect x="0" y="5" width="5" height="5" fill="#a8c8e8"/><rect x="5" y="5" width="5" height="5" fill="#2a4060"/><rect x="10" y="5" width="5" height="5" fill="#dce8f4"/><rect x="0" y="10" width="5" height="5" fill="#2a4060"/><rect x="5" y="10" width="5" height="5" fill="#a8c8e8"/><rect x="10" y="10" width="5" height="5" fill="#dce8f4"/></svg>
<div class="t" style="left:118px;top:515.00px;font-size:13px;">B04</div>
<div class="t" style="left:96px;top:532.67px;font-size:12.2px;">Band 1 (Gray)</div>
<div style="position:absolute;left:96px;top:546px;width:16px;height:96px;background:linear-gradient(#fff,#000)"></div>
<div class="t" style="left:117px;top:545.67px;font-size:12.2px;">65,535</div>
<div class="t" style="left:117px;top:629.67px;font-size:12.2px;">0</div>
<div style="position:absolute;left:108px;top:832px;width:61px;height:20px;background:#e4e4e4;border:1px solid #c8c8c8;border-top:none;box-sizing:border-box;border-radius:0 0 2px 2px"></div>
<div style="position:absolute;left:53px;top:831px;width:54px;height:23px;background:#f8f8f8;border:1px solid #c0c0c0;border-top:none;box-sizing:border-box;border-radius:0 0 2px 2px"></div>
<div class="t s" style="left:63px;top:836.37px;font-size:11.5px;">Layers</div>
<div class="t s" style="left:118px;top:835.37px;font-size:11.5px;">Browser</div>
<svg style="left:281px;top:857px" width="18" height="1"><rect x="0" y="0" width="1" height="1" fill="#b4b4b4"/><rect x="3" y="0" width="1" height="1" fill="#b4b4b4"/><rect x="6" y="0" width="1" height="1" fill="#b4b4b4"/><rect x="9" y="0" width="1" height="1" fill="#b4b4b4"/><rect x="12" y="0" width="1" height="1" fill="#b4b4b4"/><rect x="15" y="0" width="1" height="1" fill="#b4b4b4"/></svg>
<div class="t" style="left:56px;top:865.66px;font-size:12.8px;">Vertex Editor</div>
<svg style="left:496px;top:866px" width="11" height="11" viewBox="0 0 11 11"><rect x="0.5" y="0.5" width="10" height="10" rx="2" fill="none" stroke="#777"/><rect x="2.5" y="4.5" width="4" height="4" fill="none" stroke="#777"/><path d="M4.5 4.5V2.5H8.5V6.5H6.5" fill="none" stroke="#777"/></svg>
<svg style="left:510px;top:866px" width="11" height="11" viewBox="0 0 11 11"><rect x="0.5" y="0.5" width="10" height="10" rx="2" fill="none" stroke="#777"/><path d="M3 3L8 8M8 3L3 8" stroke="#555" stroke-width="1.8"/></svg>
<div style="position:absolute;left:499px;top:880px;width:23px;height:23px;background:#f4f4f4;border:1px solid #b8b8b8;border-radius:3px;box-sizing:border-box"></div>
<svg style="left:505px;top:886px" width="12" height="11"><path d="M1 1.5H11M1 5.5H11M1 9.5H11" stroke="#444" stroke-width="1.5"/></svg>
<div class="t s" style="left:61px;top:934.78px;font-size:11.6px;">Right click on an editable feature to show its table of vertices.</div>
<div class="t s" style="left:62px;top:962.78px;font-size:11.6px;">When a feature is bound to this panel, dragging a rectangle to select vertices on the canvas will</div>
<div class="t s" style="left:61px;top:976.78px;font-size:11.6px;">only select those of the bound feature.</div>
<div style="position:absolute;left:529px;top:199px;width:1029px;height:813px;background:#fff;border:1px solid #a0a0a0;box-sizing:border-box"></div>
<svg style="left:759px;top:220px" width="471" height="773" viewBox="759 220 471 773">
<defs>
<filter id="b1" x="-20%" y="-20%" width="140%" height="140%"><feGaussianBlur stdDeviation="1.2"/></filter>
<filter id="rag" x="-20%" y="-20%" width="140%" height="140%"><feTurbulence type="fractalNoise" baseFrequency="0.09" numOctaves="3" seed="2" result="t"/><feDisplacementMap in="SourceGraphic" in2="t" scale="10" xChannelSelector="R" yChannelSelector="G" result="d"/><feGaussianBlur in="d" stdDeviation="0.9"/></filter>
<filter id="b3" x="-50%" y="-50%" width="200%" height="200%"><feTurbulence type="fractalNoise" baseFrequency="0.05" numOctaves="3" seed="5" result="t"/><feDisplacementMap in="SourceGraphic" in2="t" scale="22" xChannelSelector="R" yChannelSelector="G" result="d"/><feGaussianBlur in="d" stdDeviation="2"/></filter>
<filter id="b6" x="-50%" y="-50%" width="200%" height="200%"><feTurbulence type="fractalNoise" baseFrequency="0.04" numOctaves="3" seed="9" result="t"/><feDisplacementMap in="SourceGraphic" in2="t" scale="26" xChannelSelector="R" yChannelSelector="G" result="d"/><feGaussianBlur in="d" stdDeviation="4"/></filter>
<filter id="b12" x="-50%" y="-50%" width="200%" height="200%"><feGaussianBlur stdDeviation="12"/></filter>
<mask id="isl" maskUnits="userSpaceOnUse" x="759" y="220" width="471" height="773"><path d="M1095 250 L1120 246 L1140 272 L1160 276 L1168 330 L1178 385 L1180 410 L1170 430 L1146 450 L1140 470 L1132 508 L1123 541 L1118 600 L1108 640 L1096 665 L1082 688 L1080 712 L1065 735 L1050 760 L1038 775 L1000 777 L998 798 L989 833 L973 879 L973 937 L964 966 L938 960 L936 944 L929 907 L913 870 L885 849 L855 828 L836 805 L822 740 L805 720 L799 711 L806 675 L810 625 L813 596 L833 561 L877 509 L906 480 L925 440 L940 400 L960 365 L985 330 L1020 305 L1058 287 L1080 270Z" fill="#fff" filter="url(#rag)"/></mask>
<filter id="cld" x="0" y="0" width="100%" height="100%"><feTurbulence type="fractalNoise" baseFrequency="0.035" numOctaves="4" seed="21" result="n"/><feColorMatrix in="n" type="matrix" values="0 0 0 0 0.95  0 0 0 0 0.98  0 0 0 0 0.94  0 0 0 5 -2.6"/></filter>
<filter id="spk" x="0" y="0" width="100%" height="100%">
 <feTurbulence type="fractalNoise" baseFrequency="0.5" numOctaves="2" seed="7" result="n"/>
 <feColorMatrix in="n" type="matrix" values="0 0 0 0 0.96  0 0 0 0 0.985  0 0 0 0 0.95  0 0 0 -18 7.2"/>
</filter>
<filter id="spk2" x="0" y="0" width="100%" height="100%">
 <feTurbulence type="fractalNoise" baseFrequency="0.5" numOctaves="2" seed="11" result="n"/>
 <feColorMatrix in="n" type="matrix" values="0 0 0 0 0.08  0 0 0 0 0.45  0 0 0 0 0.2  0 0 0 -18 6.6"/>
</filter>
</defs>
<rect x="759" y="220" width="471" height="773" fill="#f5fbf2"/>
<rect x="759" y="220" width="471" height="29" fill="#f2faef"/>
<rect x="759" y="249" width="40" height="230" fill="#f3faf0"/>
<g mask="url(#isl)">
<path d="M1095 250 L1120 246 L1140 272 L1160 276 L1168 330 L1178 385 L1180 410 L1170 430 L1146 450 L1140 470 L1132 508 L1123 541 L1118 600 L1108 640 L1096 665 L1082 688 L1080 712 L1065 735 L1050 760 L1038 775 L1000 777 L998 798 L989 833 L973 879 L973 937 L964 966 L938 960 L936 944 L929 907 L913 870 L885 849 L855 828 L836 805 L822 740 L805 720 L799 711 L806 675 L810 625 L813 596 L833 561 L877 509 L906 480 L925 440 L940 400 L960 365 L985 330 L1020 305 L1058 287 L1080 270Z" fill="#80c683"/>
<g filter="url(#b12)">
<path d="M790 500 L880 500 L870 600 L850 700 L880 860 L800 840 Z" fill="#b2dcab"/>
<path d="M925 280 L1070 270 L1060 330 L1040 400 L1000 470 L930 470 L880 480 Z" fill="#d6eed2"/>
<path d="M940 300 L1030 290 L990 360 L930 420 L900 400Z" fill="#d4eecf"/>
<path d="M900 420 L1000 330 L1070 290 L1080 240 L900 280Z" fill="#eaf7e6"/>
<path d="M930 395 L1000 380 L1010 500 L920 505Z" fill="#a8d8a2"/>
<path d="M790 560 L830 540 L840 700 L820 760 L790 720Z" fill="#cdeac8"/>
<path d="M1075 240 L1155 240 L1150 300 L1100 310 L1070 300 Z" fill="#cdeac7"/>
</g>
<g filter="url(#b6)">
<path d="M880 500 L960 470 L975 560 L965 700 L950 860 L900 850 L870 760 L860 620Z" fill="#66b66c"/>
<path d="M1000 420 L1140 430 L1130 505 L1010 500Z" fill="#68b76d"/>
<path d="M915 780 L995 780 L985 900 L970 960 L935 950 L920 880Z" fill="#44a255"/>
</g>
<g filter="url(#b3)">
<path d="M1068 312 L1120 300 L1150 315 L1160 385 L1120 398 L1080 390 L1062 350Z" fill="#23813f"/>
<path d="M1078 330 L1112 325 L1120 360 L1085 368Z" fill="#0f6630"/>
<path d="M966 535 L1040 545 L1085 540 L1090 620 L1080 700 L1055 745 L1010 772 L975 770 L970 690 L975 600Z" fill="#25843f"/>
<path d="M877 640 L935 630 L945 705 L885 715Z" fill="#45a257"/>
<path d="M955 830 L988 830 L980 880 L958 880Z" fill="#3a9a50"/>
<path d="M965 742 L1012 742 L1005 772 L972 772Z" fill="#1f7a3c"/>
</g>
<g filter="url(#b6)">
<path d="M992 478 L1035 478 L1040 520 L1030 560 L1000 562 L985 520Z" fill="#f4fbf1"/>
<path d="M955 610 L990 605 L995 690 L985 750 L955 745 L950 680Z" fill="#eef8ea"/>
<path d="M1100 385 L1178 390 L1178 440 L1110 445Z" fill="#edf7e9"/>
<ellipse cx="1088" cy="445" rx="12" ry="9" fill="#f0f9ec"/>
<path d="M950 770 L980 768 L975 795 L952 795Z" fill="#f0f9ec"/>
<path d="M982 768 L1040 770 L1030 810 L990 812Z" fill="#eef8ea"/>
<path d="M1082 490 L1125 500 L1115 600 L1105 665 L1085 660 L1080 560Z" fill="#bde2b6"/>
<path d="M897 700 L955 700 L952 765 L900 762Z" fill="#cfeac9"/>
<ellipse cx="1135" cy="330" rx="10" ry="22" fill="#c8e6c2"/>
<ellipse cx="1100" cy="370" rx="4" ry="26" fill="#b8dfb2"/>
<ellipse cx="1045" cy="610" rx="10" ry="12" fill="#cfeac9"/>
<ellipse cx="1060" cy="560" rx="8" ry="10" fill="#cfeac9"/>
<ellipse cx="1010" cy="655" rx="10" ry="14" fill="#d8eed3"/>
<ellipse cx="1040" cy="700" rx="8" ry="10" fill="#d8eed3"/>
<ellipse cx="1000" cy="575" rx="7" ry="9" fill="#e8f5e4"/>
<ellipse cx="1022" cy="612" rx="6" ry="8" fill="#e8f5e4"/>
<ellipse cx="1052" cy="645" rx="7" ry="6" fill="#e8f5e4"/>
<ellipse cx="1036" cy="690" rx="6" ry="8" fill="#e8f5e4"/>
<ellipse cx="1002" cy="722" rx="7" ry="6" fill="#e8f5e4"/>
<ellipse cx="1066" cy="590" rx="5" ry="7" fill="#e8f5e4"/>
<ellipse cx="1078" cy="625" rx="5" ry="6" fill="#e8f5e4"/>
<ellipse cx="992" cy="648" rx="5" ry="7" fill="#e8f5e4"/>
<ellipse cx="1048" cy="540" rx="8" ry="6" fill="#e8f5e4"/>
<ellipse cx="1015" cy="545" rx="6" ry="5" fill="#e8f5e4"/>
<ellipse cx="1060" cy="700" rx="5" ry="5" fill="#e8f5e4"/>
<ellipse cx="1085" cy="560" rx="4" ry="6" fill="#e8f5e4"/>
<ellipse cx="940" cy="945" rx="10" ry="14" fill="#c8e6c2"/>
</g>
<path d="M1095 250 L1058 287 L1020 305 L985 330 L960 365 L940 400 L925 440 L906 480 L877 509 L833 561 L813 596 L810 625 L806 675 L799 711 L822 740 L836 805" fill="none" stroke="#eef8eb" stroke-width="26" filter="url(#b12)"/>
<ellipse cx="945" cy="812" rx="7" ry="16" fill="#f5fbf2" filter="url(#b1)"/>
<rect x="759" y="220" width="471" height="773" filter="url(#cld)" opacity="0.4"/>
<rect x="759" y="220" width="471" height="773" filter="url(#spk)" opacity="0.9"/>
<rect x="759" y="220" width="471" height="773" filter="url(#spk2)" opacity="0.35"/>
</g>
<circle cx="861" cy="872" r="2.5" fill="#8fcd8c"/><circle cx="1100" cy="805" r="2" fill="#a0d49c"/>
</svg>
<div style="position:absolute;left:1558px;top:198px;width:362px;height:814px;background:#f0f0f0"></div>
<div style="position:absolute;left:1561px;top:198px;width:1px;height:814px;background:#f0f0f0"></div>
<div class="t" style="left:1568px;top:202.67px;font-size:12.2px;">Identify Results</div>
<svg style="left:1893px;top:204px" width="11" height="11" viewBox="0 0 11 11"><rect x="0.5" y="0.5" width="10" height="10" rx="2" fill="none" stroke="#777"/><rect x="2.5" y="4.5" width="4" height="4" fill="none" stroke="#777"/><path d="M4.5 4.5V2.5H8.5V6.5H6.5" fill="none" stroke="#777"/></svg>
<svg style="left:1907px;top:204px" width="11" height="11" viewBox="0 0 11 11"><rect x="0.5" y="0.5" width="10" height="10" rx="2" fill="none" stroke="#777"/><path d="M3 3L8 8M8 3L3 8" stroke="#555" stroke-width="1.8"/></svg>
<div style="position:absolute;left:1650px;top:222px;width:24px;height:22px;background:#dcdcdc;border:1px solid #adadad;border-radius:3px;box-sizing:border-box"></div>
<svg style="left:1572.0px;top:225.0px" width="16" height="16" viewBox="0 0 16 16"><rect x="1" y="1" width="14" height="14" rx="1" fill="#f0f0f0" stroke="#e0e0e0"/><path d="M3 5H6M3 10H6" stroke="#ccc"/><rect x="7" y="3" width="6" height="4" rx="2" fill="#fff" stroke="#e0e0e0"/><rect x="7" y="9" width="6" height="4" rx="2" fill="#fff" stroke="#e0e0e0"/></svg>
<svg style="left:1604.0px;top:225.0px" width="16" height="16" viewBox="0 0 16 16"><path d="M1 1H15M2 1V15M2 7H4M2 13H4" fill="none" stroke="#888" stroke-width="0.9"/><rect x="4" y="4" width="3" height="3" fill="#f08a10"/><rect x="4" y="11" width="3" height="3" fill="#f08a10"/><path d="M9 1H12V9H15L10.5 15L6 9H9Z" fill="#5b8fd0" stroke="#3a6aa0" stroke-width="0.6"/></svg>
<svg style="left:1629.0px;top:225.0px" width="16" height="16" viewBox="0 0 16 16"><path d="M1 1H7M2 1V15M2 7H4M2 13H4" fill="none" stroke="#888" stroke-width="0.9"/><rect x="4" y="4" width="3" height="3" fill="#f08a10"/><rect x="4" y="11" width="3" height="3" fill="#f08a10"/><path d="M9 15H12V7H15L10.5 1L6 7H9Z" fill="#5b8fd0" stroke="#3a6aa0" stroke-width="0.6"/></svg>
<svg style="left:1654.0px;top:225.0px" width="16" height="16" viewBox="0 0 16 16"><path d="M5 0L6.5 3.5H10L7.2 5.8L8.3 9.5L5 7.3L1.7 9.5L2.8 5.8L0 3.5H3.5Z" fill="#f5d020" stroke="#f08a10" stroke-width="0.5"/><rect x="3" y="12" width="3" height="3" fill="#f08a10"/><path d="M9 2H12V9H15L10.5 15L6 9H9Z" fill="#5b8fd0" stroke="#3a6aa0" stroke-width="0.6"/></svg>
<svg style="left:1686.0px;top:225.0px" width="16" height="16" viewBox="0 0 16 16"><rect x="1" y="1" width="9" height="9" fill="#f5e050" stroke="#d8b800" stroke-width="0.8"/><rect x="4" y="4" width="9" height="9" fill="#f5e050" stroke="#d8b800" stroke-width="0.8"/><rect x="9" y="9" width="7" height="7" rx="1" fill="#e02828"/><circle cx="12.5" cy="12.5" r="2" fill="none" stroke="#fff" stroke-width="0.9"/></svg>
<svg style="left:1717.0px;top:225.0px" width="16" height="16" viewBox="0 0 16 16"><path d="M5 1H10L13 4V11H5Z" fill="#f4f4f4" stroke="#ddd"/><path d="M2 4H7L10 7V15H2Z" fill="#f4f4f4" stroke="#ddd"/></svg>
<svg style="left:1743.0px;top:225.0px" width="16" height="16" viewBox="0 0 16 16"><rect x="4" y="1" width="8" height="5" fill="#eee" stroke="#ddd"/><rect x="1" y="5" width="14" height="7" rx="2" fill="#ddd"/><rect x="4" y="10" width="8" height="5" fill="#eee" stroke="#ddd"/></svg>
<svg style="left:1775.0px;top:225.0px" width="16" height="16" viewBox="0 0 16 16"><rect x="1" y="1" width="14" height="14" fill="none" stroke="#666" stroke-dasharray="1.5 1"/><circle cx="6" cy="6" r="5" fill="#6a9bd1"/><text x="4.5" y="9" font-family="Liberation Serif" font-style="italic" font-weight="bold" font-size="8" fill="#fff">i</text><path d="M8 7L8 16L10.5 13.5L12.5 17L14 16L12 12.5H15Z" fill="#fff" stroke="#333" stroke-width="0.7"/></svg>
<svg style="left:1812.0px;top:225.0px" width="16" height="16" viewBox="0 0 16 16"><path d="M6 6L15 14" stroke="#555" stroke-width="3.2"/><path d="M6.5 6.5L14.5 13.5" stroke="#e8cf7a" stroke-width="2"/><path d="M1 3Q1 0 4 0L3 2.5L5 4L7 2Q8 6 5 7Q2 7 1 3Z" fill="#ddd" stroke="#666" stroke-width="0.7"/></svg>
<svg style="left:1844.0px;top:225.0px" width="16" height="16" viewBox="0 0 16 16"><rect x="2" y="1" width="13" height="15" fill="#5b8fd0"/><rect x="2" y="1" width="3" height="15" fill="#2a3a5a"/><text x="7" y="12" font-family="Liberation Sans" font-size="10" fill="#fff">?</text></svg>
<div style="position:absolute;left:1597px;top:226px;width:1px;height:14px;background:#d4d4d4"></div>
<div style="position:absolute;left:1679px;top:226px;width:1px;height:14px;background:#d4d4d4"></div>
<div style="position:absolute;left:1711px;top:226px;width:1px;height:14px;background:#d4d4d4"></div>
<div style="position:absolute;left:1768px;top:226px;width:1px;height:14px;background:#d4d4d4"></div>
<div style="position:absolute;left:1837px;top:226px;width:1px;height:14px;background:#d4d4d4"></div>
<svg style="left:1797.5px;top:231px" width="7" height="5"><path d="M0 0H7L3.5 4.5Z" fill="#444"/></svg>
<div style="position:absolute;left:1564px;top:249px;width:356px;height:118px;background:#fff;border:1px solid #a8a8a8;box-sizing:border-box"></div>
<div style="position:absolute;left:1565px;top:250px;width:355px;height:18px;background:linear-gradient(#fdfdfd,#f0f0f0);border-bottom:1px solid #c8c8c8;box-sizing:border-box"></div>
<div style="position:absolute;left:1664px;top:250px;width:1px;height:18px;background:#d4d4d4"></div>
<div class="t" style="left:1568px;top:253.67px;font-size:12.2px;">Feature</div>
<div class="t" style="left:1667px;top:253.67px;font-size:12.2px;">Value</div>
<div class="t s" style="left:1568px;top:378.37px;font-size:11.5px;">Mode</div>
<div style="position:absolute;left:1602px;top:373px;width:312px;height:23px;background:linear-gradient(#fbfbfb,#ececec);border:1px solid #adadad;border-radius:3px;box-sizing:border-box"></div>
<div class="t s" style="left:1608px;top:379.37px;font-size:11.5px;">Top Down, Stop at First</div>
<svg style="left:1899.0px;top:382px" width="8" height="5"><path d="M0 0H8L4.0 4.5Z" fill="#444"/></svg>
<div class="t s" style="left:1568px;top:409.37px;font-size:11.5px;">View</div>
<div style="position:absolute;left:1599px;top:405px;width:72px;height:22px;background:linear-gradient(#fbfbfb,#ececec);border:1px solid #adadad;border-radius:3px;box-sizing:border-box"></div>
<div class="t s" style="left:1605px;top:410.37px;font-size:11.5px;">Tree</div>
<svg style="left:1655.0px;top:413px" width="8" height="5"><path d="M0 0H8L4.0 4.5Z" fill="#444"/></svg>
<svg style="left:1735px;top:436px" width="18" height="1"><rect x="0" y="0" width="1" height="1" fill="#b4b4b4"/><rect x="3" y="0" width="1" height="1" fill="#b4b4b4"/><rect x="6" y="0" width="1" height="1" fill="#b4b4b4"/><rect x="9" y="0" width="1" height="1" fill="#b4b4b4"/><rect x="12" y="0" width="1" height="1" fill="#b4b4b4"/><rect x="15" y="0" width="1" height="1" fill="#b4b4b4"/></svg>
<div class="t" style="left:1568px;top:443.08px;font-size:12.9px;">Processing Toolbox</div>
<svg style="left:1893px;top:444px" width="11" height="11" viewBox="0 0 11 11"><rect x="0.5" y="0.5" width="10" height="10" rx="2" fill="none" stroke="#777"/><rect x="2.5" y="4.5" width="4" height="4" fill="none" stroke="#777"/><path d="M4.5 4.5V2.5H8.5V6.5H6.5" fill="none" stroke="#777"/></svg>
<svg style="left:1907px;top:444px" width="11" height="11" viewBox="0 0 11 11"><rect x="0.5" y="0.5" width="10" height="10" rx="2" fill="none" stroke="#777"/><path d="M3 3L8 8M8 3L3 8" stroke="#555" stroke-width="1.8"/></svg>
<div style="position:absolute;left:1643px;top:464px;width:24px;height:22px;background:#dcdcdc;border:1px solid #adadad;border-radius:3px;box-sizing:border-box"></div>
<svg style="left:1572.0px;top:466.0px" width="16" height="16" viewBox="0 0 16 16"><circle cx="4" cy="4" r="3" fill="#e02020" stroke="#e02020" stroke-width="1.5" stroke-dasharray="1 1"/><circle cx="10" cy="8" r="2.5" fill="#888" stroke="#888" stroke-width="1.2" stroke-dasharray="1 1"/><circle cx="5" cy="12" r="2" fill="#8ab0e0" stroke="#8ab0e0" stroke-width="1" stroke-dasharray="1 1"/></svg>
<svg style="left:1597.0px;top:466.0px" width="16" height="16" viewBox="0 0 16 16"><path d="M7 1Q3 1 3 4V6H8V7H3Q1 7 1 10Q1 13 3 13H4V10Q4 9 6 9H9Q11 9 11 7V4Q11 1 7 1Z" fill="#3e79b0"/><path d="M9 15Q13 15 13 12V10H8V9H13Q15 9 15 6Q15 3 13 3H12V6Q12 7 10 7H7Q5 7 5 9V12Q5 15 9 15Z" fill="#fcd34f"/></svg>
<svg style="left:1622.0px;top:466.0px" width="16" height="16" viewBox="0 0 16 16"><circle cx="8" cy="8" r="7" fill="#fff" stroke="#888" stroke-width="1"/><path d="M8 3V8L11 10" fill="none" stroke="#888" stroke-width="1"/></svg>
<svg style="left:1647.0px;top:466.0px" width="16" height="16" viewBox="0 0 16 16"><path d="M3 1H10L13 4V15H3Z" fill="#f8f8f8" stroke="#999" stroke-width="0.8"/><path d="M5 7H11M5 9H11M5 11H11M5 13H11" stroke="#999" stroke-width="0.7"/></svg>
<svg style="left:1678.0px;top:466.0px" width="16" height="16" viewBox="0 0 16 16"><path d="M2 3H11L14 8L11 12H6V15L2 12Z" fill="#dcdad4"/></svg>
<svg style="left:1711.0px;top:466.0px" width="16" height="16" viewBox="0 0 16 16"><path d="M6 6L15 14" stroke="#555" stroke-width="3.2"/><path d="M6.5 6.5L14.5 13.5" stroke="#e8cf7a" stroke-width="2"/><path d="M1 3Q1 0 4 0L3 2.5L5 4L7 2Q8 6 5 7Q2 7 1 3Z" fill="#ddd" stroke="#666" stroke-width="0.7"/></svg>
<svg style="left:1582.5px;top:478px" width="5" height="5"><path d="M0 0H5L2.5 4.5Z" fill="#333"/></svg>
<svg style="left:1607.5px;top:478px" width="5" height="5"><path d="M0 0H5L2.5 4.5Z" fill="#333"/></svg>
<div style="position:absolute;left:1672px;top:467px;width:1px;height:14px;background:#d4d4d4"></div>
<div style="position:absolute;left:1702px;top:467px;width:1px;height:14px;background:#d4d4d4"></div>
<div style="position:absolute;left:1564px;top:491px;width:356px;height:21px;background:#fff;border:1px solid #adadad;border-radius:3px;box-sizing:border-box"></div>
<svg style="left:1573.0px;top:494.0px" width="14" height="14" viewBox="0 0 16 16"><circle cx="6" cy="6" r="4.5" fill="none" stroke="#888" stroke-width="1.2"/><path d="M9.5 9.5L14 14" stroke="#888" stroke-width="1.5"/></svg>
<div class="t s" style="left:1593px;top:495.37px;font-size:11.5px;">r</div>
<svg style="left:1898.0px;top:494.0px" width="14" height="14" viewBox="0 0 16 16"><path d="M1 8L6 3H15V13H6Z" fill="#c8c8c8"/><path d="M8 5.5L12.5 10.5M12.5 5.5L8 10.5" stroke="#fff" stroke-width="1.3"/></svg>
<div style="position:absolute;left:1564px;top:511px;width:356px;height:172px;background:#fff;border:1px solid #a8a8a8;border-bottom:none;box-sizing:border-box"></div>
<div style="position:absolute;left:1566px;top:531px;width:339px;height:18px;background:#efefef"></div>
<div style="position:absolute;left:1905px;top:512px;width:15px;height:171px;background:#f0f0f0"></div>
<div style="position:absolute;left:1906px;top:553px;width:13px;height:124px;background:#dadada"></div>
<svg style="left:1908px;top:516px" width="8" height="5"><path d="M0 4.5H8L4 0Z" fill="#555"/></svg>
<svg style="left:1908.5px;top:673px" width="7" height="5"><path d="M0 0H7L3.5 4.5Z" fill="#555"/></svg>
<svg style="left:1571.0px;top:519px" width="8" height="5"><path d="M0 0H8L4.0 4.5Z" fill="#444"/></svg>
<svg style="left:1588.0px;top:514.0px" width="16" height="16" viewBox="0 0 16 16"><circle cx="8" cy="8" r="7" fill="#fff" stroke="#888" stroke-width="1"/><path d="M8 3V8L11 10" fill="none" stroke="#888" stroke-width="1"/></svg>
<div class="t" style="left:1610px;top:516.50px;font-size:12.4px;">Recently used</div>
<svg style="left:1608.0px;top:532.0px" width="16" height="16" viewBox="0 0 16 16"><g transform="translate(8 8)" fill="#8ab0e0"><rect x="-1.3" y="-7.5" width="2.6" height="4" transform="rotate(0)"/><rect x="-1.3" y="-7.5" width="2.6" height="4" transform="rotate(45)"/><rect x="-1.3" y="-7.5" width="2.6" height="4" transform="rotate(90)"/><rect x="-1.3" y="-7.5" width="2.6" height="4" transform="rotate(135)"/><rect x="-1.3" y="-7.5" width="2.6" height="4" transform="rotate(180)"/><rect x="-1.3" y="-7.5" width="2.6" height="4" transform="rotate(225)"/><rect x="-1.3" y="-7.5" width="2.6" height="4" transform="rotate(270)"/><rect x="-1.3" y="-7.5" width="2.6" height="4" transform="rotate(315)"/><circle r="5"/><circle r="2" fill="#fff"/></g></svg>
<div class="t" style="left:1630px;top:534.50px;font-size:12.4px;">Raster calculator</div>
<svg style="left:1608.0px;top:550.0px" width="16" height="16" viewBox="0 0 16 16"><g transform="translate(8 8)" fill="#8ab0e0"><rect x="-1.3" y="-7.5" width="2.6" height="4" transform="rotate(0)"/><rect x="-1.3" y="-7.5" width="2.6" height="4" transform="rotate(45)"/><rect x="-1.3" y="-7.5" width="2.6" height="4" transform="rotate(90)"/><rect x="-1.3" y="-7.5" width="2.6" height="4" transform="rotate(135)"/><rect x="-1.3" y="-7.5" width="2.6" height="4" transform="rotate(180)"/><rect x="-1.3" y="-7.5" width="2.6" height="4" transform="rotate(225)"/><rect x="-1.3" y="-7.5" width="2.6" height="4" transform="rotate(270)"/><rect x="-1.3" y="-7.5" width="2.6" height="4" transform="rotate(315)"/><circle r="5"/><circle r="2" fill="#fff"/></g></svg>
<div class="t" style="left:1630px;top:552.50px;font-size:12.4px;">Join attributes by field value</div>
<svg style="left:1608.0px;top:568.0px" width="16" height="16" viewBox="0 0 16 16"><g transform="translate(4.5 4.5)" fill="#d02020"><rect x="-1" y="-4.5" width="2" height="9" transform="rotate(0)"/><rect x="-1" y="-4.5" width="2" height="9" transform="rotate(45)"/><rect x="-1" y="-4.5" width="2" height="9" transform="rotate(90)"/><rect x="-1" y="-4.5" width="2" height="9" transform="rotate(135)"/></g><g transform="translate(11 8)" fill="#888"><rect x="-0.8" y="-3.5" width="1.6" height="7" transform="rotate(0)"/><rect x="-0.8" y="-3.5" width="1.6" height="7" transform="rotate(45)"/><rect x="-0.8" y="-3.5" width="1.6" height="7" transform="rotate(90)"/><rect x="-0.8" y="-3.5" width="1.6" height="7" transform="rotate(135)"/></g><circle cx="5.5" cy="12.5" r="2" fill="#8ab0e0"/></svg>
<div class="t" style="left:1630px;top:570.50px;font-size:12.4px;">Model_builder_tutorial</div>
<svg style="left:1608.0px;top:586.0px" width="16" height="16" viewBox="0 0 16 16"><g transform="translate(8 8)" fill="#8ab0e0"><rect x="-1.3" y="-7.5" width="2.6" height="4" transform="rotate(0)"/><rect x="-1.3" y="-7.5" width="2.6" height="4" transform="rotate(45)"/><rect x="-1.3" y="-7.5" width="2.6" height="4" transform="rotate(90)"/><rect x="-1.3" y="-7.5" width="2.6" height="4" transform="rotate(135)"/><rect x="-1.3" y="-7.5" width="2.6" height="4" transform="rotate(180)"/><rect x="-1.3" y="-7.5" width="2.6" height="4" transform="rotate(225)"/><rect x="-1.3" y="-7.5" width="2.6" height="4" transform="rotate(270)"/><rect x="-1.3" y="-7.5" width="2.6" height="4" transform="rotate(315)"/><circle r="5"/><circle r="2" fill="#fff"/></g></svg>
<div class="t" style="left:1630px;top:588.50px;font-size:12.4px;">Extract by location</div>
<svg style="left:1608.0px;top:604.0px" width="16" height="16" viewBox="0 0 16 16"><path d="M2 1H13V4L12 3H6L10 8L5 13H12L13 12V15H2L7 8Z" fill="#5a7080"/></svg>
<div class="t" style="left:1630px;top:606.50px;font-size:12.4px;">Join attributes by location (summary)</div>
<svg style="left:1571.0px;top:627px" width="8" height="5"><path d="M0 0H8L4.0 4.5Z" fill="#444"/></svg>
<svg style="left:1588.0px;top:622.0px" width="16" height="16" viewBox="0 0 16 16"><circle cx="7" cy="7" r="5" fill="none" stroke="#7ab32a" stroke-width="2.5"/><path d="M8 8L14 15" stroke="#7ab32a" stroke-width="2.5"/><circle cx="7.5" cy="7.5" r="1.7" fill="#f28a1e"/></svg>
<div class="t" style="left:1610px;top:624.50px;font-size:12.4px;">Cartography</div>
<svg style="left:1608.0px;top:640.0px" width="16" height="16" viewBox="0 0 16 16"><g transform="translate(8 8)" fill="#8ab0e0"><rect x="-1.3" y="-7.5" width="2.6" height="4" transform="rotate(0)"/><rect x="-1.3" y="-7.5" width="2.6" height="4" transform="rotate(45)"/><rect x="-1.3" y="-7.5" width="2.6" height="4" transform="rotate(90)"/><rect x="-1.3" y="-7.5" width="2.6" height="4" transform="rotate(135)"/><rect x="-1.3" y="-7.5" width="2.6" height="4" transform="rotate(180)"/><rect x="-1.3" y="-7.5" width="2.6" height="4" transform="rotate(225)"/><rect x="-1.3" y="-7.5" width="2.6" height="4" transform="rotate(270)"/><rect x="-1.3" y="-7.5" width="2.6" height="4" transform="rotate(315)"/><circle r="5"/><circle r="2" fill="#fff"/></g></svg>
<div class="t" style="left:1630px;top:642.50px;font-size:12.4px;">Align points to features</div>
<svg style="left:1608.0px;top:658.0px" width="16" height="16" viewBox="0 0 16 16"><g transform="translate(8 8)" fill="#8ab0e0"><rect x="-1.3" y="-7.5" width="2.6" height="4" transform="rotate(0)"/><rect x="-1.3" y="-7.5" width="2.6" height="4" transform="rotate(45)"/><rect x="-1.3" y="-7.5" width="2.6" height="4" transform="rotate(90)"/><rect x="-1.3" y="-7.5" width="2.6" height="4" transform="rotate(135)"/><rect x="-1.3" y="-7.5" width="2.6" height="4" transform="rotate(180)"/><rect x="-1.3" y="-7.5" width="2.6" height="4" transform="rotate(225)"/><rect x="-1.3" y="-7.5" width="2.6" height="4" transform="rotate(270)"/><rect x="-1.3" y="-7.5" width="2.6" height="4" transform="rotate(315)"/><circle r="5"/><circle r="2" fill="#fff"/></g></svg>
<div class="t" style="left:1630px;top:660.50px;font-size:12.4px;">Combine style databases</div>
<svg style="left:1608.0px;top:676.0px" width="16" height="16" viewBox="0 0 16 16"><g transform="translate(8 8)" fill="#8ab0e0"><rect x="-1.3" y="-7.5" width="2.6" height="4" transform="rotate(0)"/><rect x="-1.3" y="-7.5" width="2.6" height="4" transform="rotate(45)"/><rect x="-1.3" y="-7.5" width="2.6" height="4" transform="rotate(90)"/><rect x="-1.3" y="-7.5" width="2.6" height="4" transform="rotate(135)"/><rect x="-1.3" y="-7.5" width="2.6" height="4" transform="rotate(180)"/><rect x="-1.3" y="-7.5" width="2.6" height="4" transform="rotate(225)"/><rect x="-1.3" y="-7.5" width="2.6" height="4" transform="rotate(270)"/><rect x="-1.3" y="-7.5" width="2.6" height="4" transform="rotate(315)"/><circle r="5"/><circle r="2" fill="#fff"/></g></svg>
<div class="t" style="left:1630px;top:678.50px;font-size:12.4px;">Create categorized renderer from styles</div>
<div style="position:absolute;left:1564px;top:682px;width:356px;height:33px;background:#5aa8ff;border:1px solid #3a7fd0;box-sizing:border-box"></div>
<div class="t s" style="left:1569px;top:685.28px;font-size:11.6px;color:#fff">You can add more algorithms to the toolbox, <span style="color:#0000f0;text-decoration:underline">enable additional</span></div>
<div class="t s" style="left:1569px;top:699.28px;font-size:11.6px;"><span style="color:#0000f0;text-decoration:underline">providers.[close]</span></div>
<svg style="left:1735px;top:717px" width="18" height="1"><rect x="0" y="0" width="1" height="1" fill="#b4b4b4"/><rect x="3" y="0" width="1" height="1" fill="#b4b4b4"/><rect x="6" y="0" width="1" height="1" fill="#b4b4b4"/><rect x="9" y="0" width="1" height="1" fill="#b4b4b4"/><rect x="12" y="0" width="1" height="1" fill="#b4b4b4"/><rect x="15" y="0" width="1" height="1" fill="#b4b4b4"/></svg>
<div class="t" style="left:1568px;top:724.67px;font-size:12.2px;">Results Viewer</div>
<svg style="left:1893px;top:725px" width="11" height="11" viewBox="0 0 11 11"><rect x="0.5" y="0.5" width="10" height="10" rx="2" fill="none" stroke="#777"/><rect x="2.5" y="4.5" width="4" height="4" fill="none" stroke="#777"/><path d="M4.5 4.5V2.5H8.5V6.5H6.5" fill="none" stroke="#777"/></svg>
<svg style="left:1907px;top:725px" width="11" height="11" viewBox="0 0 11 11"><rect x="0.5" y="0.5" width="10" height="10" rx="2" fill="none" stroke="#777"/><path d="M3 3L8 8M8 3L3 8" stroke="#555" stroke-width="1.8"/></svg>
<div style="position:absolute;left:1564px;top:740px;width:356px;height:192px;background:#fff;border:1px solid #a8a8a8;box-sizing:border-box"></div>
<svg style="left:1735px;top:933px" width="18" height="1"><rect x="0" y="0" width="1" height="1" fill="#b4b4b4"/><rect x="3" y="0" width="1" height="1" fill="#b4b4b4"/><rect x="6" y="0" width="1" height="1" fill="#b4b4b4"/><rect x="9" y="0" width="1" height="1" fill="#b4b4b4"/><rect x="12" y="0" width="1" height="1" fill="#b4b4b4"/><rect x="15" y="0" width="1" height="1" fill="#b4b4b4"/></svg>
<div style="position:absolute;left:1564px;top:936px;width:356px;height:76px;background:#fff;border:1px solid #a8a8a8;box-sizing:border-box"></div>
<div style="position:absolute;left:0px;top:1012px;width:1920px;height:25px;background:#f0f0f0"></div>
<div style="position:absolute;left:4px;top:1015px;width:200px;height:22px;background:#fff;border:1px solid #adadad;border-radius:3px;box-sizing:border-box"></div>
<svg style="left:13.0px;top:1019.0px" width="14" height="14" viewBox="0 0 16 16"><circle cx="6" cy="6" r="4.5" fill="none" stroke="#888" stroke-width="1.2"/><path d="M9.5 9.5L14 14" stroke="#888" stroke-width="1.5"/></svg>
<div class="t s" style="left:34px;top:1020.37px;font-size:11.5px;color:#777">Type to locate (Ctrl+K)</div>
<div class="t s" style="left:1165px;top:1020.54px;font-size:11.3px;;transform:scaleX(0.916);transform-origin:0 0">Coordinate</div>
<div style="position:absolute;left:1215px;top:1016px;width:86px;height:20px;background:#fff;border:1px solid #adadad;border-radius:2px;box-sizing:border-box"></div>
<div class="t s" style="left:1221px;top:1020.54px;font-size:11.3px;;transform:scaleX(0.965);transform-origin:0 0">24.948˚,118.806˚</div>
<svg style="left:1305.5px;top:1018.5px" width="15" height="15" viewBox="0 0 16 16"><circle cx="8" cy="9" r="5" fill="none" stroke="#555" stroke-width="1.5"/><path d="M4 1L12 15M8 2V6" stroke="#555" stroke-width="1.5"/></svg>
<div class="t s" style="left:1333px;top:1020.54px;font-size:11.3px;">Scale</div>
<div style="position:absolute;left:1361px;top:1016px;width:80px;height:20px;background:#fff;border:1px solid #adadad;border-radius:2px;box-sizing:border-box"></div>
<div style="position:absolute;left:1420px;top:1017px;width:1px;height:18px;background:#d0d0d0"></div>
<div class="t s" style="left:1366px;top:1020.54px;font-size:11.3px;;transform:scaleX(0.869);transform-origin:0 0">1:1458883</div>
<svg style="left:1426.5px;top:1024px" width="7" height="5"><path d="M0 0H7L3.5 4.5Z" fill="#555"/></svg>
<svg style="left:1451.5px;top:1018.5px" width="15" height="15" viewBox="0 0 16 16"><rect x="2" y="7" width="11" height="9" rx="1" fill="#666"/><path d="M4.5 7V5Q4.5 1.5 7.5 1.5Q10.5 1.5 10.5 5V7" fill="none" stroke="#666" stroke-width="1.6"/></svg>
<div class="t s" style="left:1474px;top:1020.54px;font-size:11.3px;;transform:scaleX(0.899);transform-origin:0 0">Magnifier</div>
<div style="position:absolute;left:1518px;top:1016px;width:82px;height:20px;background:#fff;border:1px solid #adadad;border-radius:2px;box-sizing:border-box"></div>
<div style="position:absolute;left:1580px;top:1017px;width:1px;height:18px;background:#d0d0d0"></div>
<div class="t s" style="left:1522px;top:1020.54px;font-size:11.3px;;transform:scaleX(0.895);transform-origin:0 0">100%</div>
<svg style="left:1587px;top:1019px" width="8" height="14"><path d="M0 5H8L4 1Z M0 9H8L4 13Z" fill="#555"/></svg>
<div class="t s" style="left:1609px;top:1020.54px;font-size:11.3px;;transform:scaleX(0.94);transform-origin:0 0">Rotation</div>
<div style="position:absolute;left:1655px;top:1016px;width:82px;height:20px;background:#fff;border:1px solid #adadad;border-radius:2px;box-sizing:border-box"></div>
<div style="position:absolute;left:1723px;top:1017px;width:1px;height:18px;background:#d0d0d0"></div>
<div class="t s" style="left:1660px;top:1020.54px;font-size:11.3px;">0.0˚</div>
<svg style="left:1726px;top:1019px" width="8" height="14"><path d="M0 5H8L4 1Z M0 9H8L4 13Z" fill="#555"/></svg>
<svg style="left:1744px;top:1019px" width="14" height="14" viewBox="0 0 14 14"><rect x="0.5" y="0.5" width="13" height="13" fill="#fff" stroke="#7a7a7a"/><path d="M3 7L6 11L11 2.5" fill="none" stroke="#000" stroke-width="1.8"/></svg>
<div class="t s" style="left:1763px;top:1020.54px;font-size:11.3px;">Render</div>
<svg style="left:1807.5px;top:1018.5px" width="15" height="15" viewBox="0 0 16 16"><circle cx="8" cy="8" r="7" fill="none" stroke="#888" stroke-width="1"/><path d="M1 8H15M2 5H14M2 11H14M8 1Q4 8 8 15M8 1Q12 8 8 15" fill="none" stroke="#888" stroke-width="0.8"/></svg>
<div class="t s" style="left:1826px;top:1020.54px;font-size:11.3px;;transform:scaleX(0.912);transform-origin:0 0">EPSG:4326</div>
<svg style="left:1897.0px;top:1018.0px" width="16" height="16" viewBox="0 0 16 16"><path d="M8 1Q15 1 15 7Q15 12 8 12L13 15L6 12Q1 11 1 7Q1 1 8 1Z" fill="#666"/><circle cx="5" cy="7" r="1.2" fill="#fff"/><circle cx="8" cy="7" r="1.2" fill="#fff"/><circle cx="11" cy="7" r="1.2" fill="#fff"/></svg>
</body></html>
